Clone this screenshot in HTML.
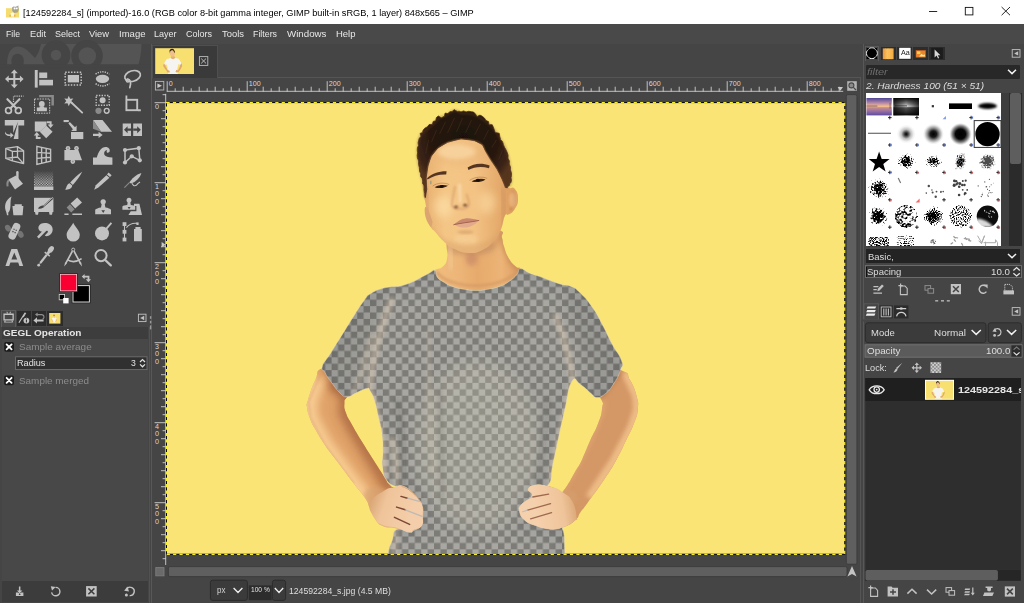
<!DOCTYPE html>
<html><head><meta charset="utf-8"><title>GIMP</title>
<style>
*{box-sizing:border-box;margin:0;padding:0}
html,body{width:1024px;height:603px;overflow:hidden;background:#454545;font-family:"Liberation Sans",sans-serif;}
#root{position:relative;width:1024px;height:603px;overflow:hidden;background:#454545;color:#dedede;font-size:9.6px}
.a{position:absolute}
.t{position:absolute;white-space:nowrap}
svg{position:absolute;overflow:visible}
</style></head><body>
<div id="root">

<!-- title -->
<div class="a" style="left:0;top:0;width:1024px;height:24px;background:#fff"></div>
<svg style="left:6px;top:5px" width="14" height="14" viewBox="0 0 14 14">
<rect x="0" y="3.2" width="13" height="9.3" fill="#f5dc6e"/>
<path d="M6 2.5 L8 1.2 L9 2 L12.4 0.6 L12.8 5 L11.5 7.5 L8 8 L6.2 6 Z" fill="#9a9a92" opacity="0.85"/>
<path d="M4.5 8.2 L7 7.2 L8.5 8.6 L8 11.5 L5 11.5 Z" fill="#fff" opacity="0.8"/>
<circle cx="8.6" cy="3.6" r="1" fill="#fff"/><circle cx="10.8" cy="3.4" r="0.9" fill="#fff"/>
<rect x="3.6" y="9.6" width="1" height="2" fill="#e08a3a" opacity="0.8"/><rect x="8.3" y="9.6" width="1" height="2" fill="#e08a3a" opacity="0.8"/>
</svg>
<div class="t" style="left:23.00px;top:6.68px;font-size:9.6px;line-height:11.04px;color:#000;transform:scaleX(0.9587);transform-origin:0 50%;">[124592284_s] (imported)-16.0 (RGB color 8-bit gamma integer, GIMP built-in sRGB, 1 layer) 848x565 – GIMP</div>
<svg style="left:0;top:0" width="1024" height="24" viewBox="0 0 1024 24" fill="none" stroke="#111" stroke-width="0.9">
<path d="M929 11.5H937.2"/><rect x="965.3" y="7.4" width="7.6" height="7.5"/><path d="M1001.6 7L1010 15.2M1010 7L1001.6 15.2"/></svg>
<div class="a" style="left:0;top:24px;width:1024px;height:19.6px;background:#494949"></div>
<div class="t" style="left:6.00px;top:28.37px;font-size:9.8px;line-height:11.27px;color:#e8e8e8;transform:scaleX(0.8865);transform-origin:0 50%;">File</div>
<div class="t" style="left:30.00px;top:28.37px;font-size:9.8px;line-height:11.27px;color:#e8e8e8;transform:scaleX(0.9475);transform-origin:0 50%;">Edit</div>
<div class="t" style="left:55.00px;top:28.37px;font-size:9.8px;line-height:11.27px;color:#e8e8e8;transform:scaleX(0.9178);transform-origin:0 50%;">Select</div>
<div class="t" style="left:89.00px;top:28.37px;font-size:9.8px;line-height:11.27px;color:#e8e8e8;transform:scaleX(0.9494);transform-origin:0 50%;">View</div>
<div class="t" style="left:118.50px;top:28.37px;font-size:9.8px;line-height:11.27px;color:#e8e8e8;transform:scaleX(0.9729);transform-origin:0 50%;">Image</div>
<div class="t" style="left:153.50px;top:28.37px;font-size:9.8px;line-height:11.27px;color:#e8e8e8;transform:scaleX(0.9178);transform-origin:0 50%;">Layer</div>
<div class="t" style="left:186.00px;top:28.37px;font-size:9.8px;line-height:11.27px;color:#e8e8e8;transform:scaleX(0.9181);transform-origin:0 50%;">Colors</div>
<div class="t" style="left:221.50px;top:28.37px;font-size:9.8px;line-height:11.27px;color:#e8e8e8;transform:scaleX(0.9616);transform-origin:0 50%;">Tools</div>
<div class="t" style="left:252.50px;top:28.37px;font-size:9.8px;line-height:11.27px;color:#e8e8e8;transform:scaleX(0.8996);transform-origin:0 50%;">Filters</div>
<div class="t" style="left:286.50px;top:28.37px;font-size:9.8px;line-height:11.27px;color:#e8e8e8;transform:scaleX(0.9936);transform-origin:0 50%;">Windows</div>
<div class="t" style="left:335.50px;top:28.37px;font-size:9.8px;line-height:11.27px;color:#e8e8e8;transform:scaleX(0.9675);transform-origin:0 50%;">Help</div>

<!-- toolbox -->
<svg style="left:0;top:0" width="152" height="310" viewBox="0 0 152 310">
<!-- wilber banner -->
<g>
<path d="M7,64.5 C7,52 12,46.5 18,46.5 C25,46.5 29,52 35,58 C38,54 40,49 41,44 L141.5,44 C141.5,52 140,59 138.5,64.5 Z" fill="#545454"/>
<circle cx="17.6" cy="59.8" r="6" fill="#454545"/>
<rect x="11.6" y="59.8" width="12" height="5" fill="#454545"/>
<circle cx="56" cy="55" r="14.4" fill="#454545"/>
<circle cx="87" cy="55.8" r="15.8" fill="#454545"/>
<circle cx="56" cy="55" r="5.2" fill="#545454"/>
<circle cx="87.3" cy="56" r="8.8" fill="#545454"/>
<rect x="0" y="64.5" width="152" height="3" fill="#454545"/>
</g>
<g fill="#c2c2c2" stroke="none">
<!-- R1 move -->
<path d="M14.30,69.60 L17.80,73.30 L15.30,73.30 L15.30,77.90 L19.90,77.90 L19.90,75.40 L23.60,78.90 L19.90,82.40 L19.90,79.90 L15.30,79.90 L15.30,84.50 L17.80,84.50 L14.30,88.20 L10.80,84.50 L13.30,84.50 L13.30,79.90 L8.70,79.90 L8.70,82.40 L5.00,78.90 L8.70,75.40 L8.70,77.90 L13.30,77.90 L13.30,73.30 L10.80,73.30 Z"/>
<!-- align -->
<rect x="34.8" y="70" width="2.9" height="17.6"/><rect x="39.2" y="72.5" width="8" height="5.6"/><rect x="39.2" y="79.8" width="13.8" height="5.6"/>
<!-- rect select -->
<rect x="67.8" y="75" width="11.2" height="7.4"/>
<rect x="65.2" y="72.2" width="16" height="12.8" fill="none" stroke="#c2c2c2" stroke-width="1.5" stroke-dasharray="1.5 1.4"/>
<!-- ellipse select -->
<ellipse cx="102.5" cy="78.8" rx="6.7" ry="4.1"/>
<path d="M95.6,74.2 Q102.5,69.4 109.4,74.2 M95.6,83.6 Q102.5,88.4 109.4,83.6" fill="none" stroke="#c2c2c2" stroke-width="1.4" stroke-dasharray="1.3 1.1"/>
<!-- lasso -->
<g fill="none" stroke="#c2c2c2" stroke-width="1.7" stroke-linecap="round">
<ellipse cx="132.6" cy="76" rx="8" ry="5.2" transform="rotate(-17 132.6 76)"/>
<path d="M127.5,79 C130.5,79.5 131.5,82.5 129.8,87.6"/>
<circle cx="127.8" cy="80.6" r="1.6" stroke-width="1.2"/>
</g>

<!-- R2 scissors -->
<g fill="none" stroke="#c2c2c2" stroke-width="1.7">
<circle cx="8.5" cy="110.4" r="2.9"/><circle cx="18.3" cy="110.4" r="2.9"/>
<path d="M7.4,99.2 L16.6,108.4 M19.4,99.2 L10.2,108.4" stroke-width="2.1" stroke-linecap="round"/>
<path d="M13.5,102 V96.2 H23.6" stroke-width="1.2" stroke-dasharray="1.2 1"/>
</g>
<!-- fg select -->
<path d="M39.2,95 H53.9 V105.5 H51.4 V97.2 H39.2 Z" fill="#8a8a8a"/>
<rect x="34.5" y="99" width="15.2" height="14.2" fill="none" stroke="#c2c2c2" stroke-width="1" stroke-dasharray="1.6 1"/>
<circle cx="41.8" cy="104" r="2.9"/>
<path d="M36.8,111.2 V107.6 H39.5 V106.6 H44.2 V107.6 H46.9 V111.2 Z"/>
<!-- wand -->
<path d="M68.8,95.8 l1.3,3 l3.2,-0.4 l-2,2.6 l2,2.6 l-3.2,-0.4 l-1.3,3 l-1.3,-3 l-3.2,0.4 l2,-2.6 l-2,-2.6 l3.2,0.4 z"/>
<path d="M71.6,102.8 L82.2,112.6" stroke="#c2c2c2" stroke-width="1.9" stroke-linecap="round"/>
<!-- select by color -->
<rect x="96.2" y="95.5" width="13" height="9.8" fill="none" stroke="#c2c2c2" stroke-width="1.4" stroke-dasharray="1.4 1.3"/>
<circle cx="102.6" cy="100.2" r="3"/>
<circle cx="98.5" cy="110.8" r="3.1" fill="#8a8a8a"/>
<circle cx="106.7" cy="110.8" r="2.4" fill="none" stroke="#c2c2c2" stroke-width="1.4"/>
<!-- crop -->
<rect x="126.4" y="99.8" width="10.8" height="10.4" fill="none" stroke="#c2c2c2" stroke-width="1.9"/><path d="M125.5,95.6 H127.3 V99 H125.5 Z M138,109.3 H140.8 V111.2 H138 Z" />

<!-- R3 unified transform -->
<path d="M4.8,120 H24.2 V125.6 H18.4 V139 H13.6 L18.2,121.5 L13.2,133 V125.6 H4.8 Z"/>
<path d="M5,131.6 C5.5,134 8,134.6 10.4,134.4 V132.4 L13.6,135.2 L10.4,138 V136 C7,136.4 4.6,135 5,131.6Z"/>
<!-- rotate -->
<path d="M34.8,121.5 H46.5 V125.6 L40.2,131.6 H34.8 Z"/>
<path d="M46.2,125.4 L52.6,131.8 L46.2,138.2 L39.8,131.8 Z"/>
<path d="M46.8,121.2 H51.6 V124.6 H53.6 L50.6,128 L47.6,124.6 H49.6 V123.2 H46.8 Z"/>
<path d="M40.6,138.9 H35.8 V135.5 H33.8 L36.8,132.1 L39.8,135.5 H37.8 V136.9 H40.6 Z"/>
<!-- scale -->
<rect x="63.6" y="120" width="5.2" height="2.1"/>
<path d="M69.8,122 L75,127.2 L76.6,125.6 V131 H71.2 L72.9,129.3 L68.4,123.6 Z"/>
<rect x="71" y="132" width="12.3" height="7.1"/>
<!-- shear -->
<path d="M93,120 H102.5 L112,131.7 H101 Z"/>
<path d="M93,120 L101,131.7 L93,128.8 Z" fill="#8a8a8a"/>
<path d="M93,133.8 H98.6 V131.8 L102.6,134.9 L98.6,138 V136 H93 Z"/>
<!-- flip -->
<path d="M122.7,123.4 H131 V136 H122.7 Z M133.2,123.4 H142 V136 H133.2 Z"/>
<path d="M124,129.7 L127.6,126.2 V128.6 H131 V130.8 H127.6 V133.2 Z M140.8,129.7 L137.2,126.2 V128.6 H133.2 V130.8 H137.2 V133.2 Z" fill="#454545"/>

<!-- R4 cube -->
<g fill="none" stroke="#c2c2c2" stroke-width="1.3" stroke-linejoin="round">
<path d="M5.8,148.4 L17.5,146.6 L23.6,150.8 V163.6 L12.4,160.8 L5.8,158.4 Z M5.8,148.4 L12.4,151.4 L23.6,150.8 M12.4,151.4 V160.8 M17.5,146.6 V157 L23.6,163.6 M5.8,158.4 L17.5,157"/>
</g>
<!-- perspective grid -->
<g fill="none" stroke="#c2c2c2" stroke-width="1.4">
<path d="M36.9,146.4 L50.6,149.4 V161.2 L36.9,164.4 Z M41.6,147.4 V163.3 M46.2,148.4 V162.2 M36.9,152.4 L50.6,153.3 M36.9,158.4 L50.6,157.3"/>
</g>
<!-- handle transform -->
<path d="M64.4,150 H78.3 L82,160.3 H64.4 Z"/>
<circle cx="68" cy="148.2" r="2.3"/><circle cx="76.5" cy="148.2" r="2.3"/><circle cx="72.8" cy="161.6" r="2.3"/>
<circle cx="68" cy="148.2" r="1" fill="#454545" opacity="0.35"/><circle cx="76.5" cy="148.2" r="1" fill="#454545" opacity="0.35"/><circle cx="72.8" cy="161.6" r="1" fill="#454545" opacity="0.35"/>
<!-- warp -->
<path d="M93,164.7 V157.4 H96.8 C98.6,151.6 101.2,147 105.6,147 C108.6,147 110.4,149.2 109.6,151.6 C109.2,152.8 107.6,153.2 106.8,152.2 C106.4,151.4 107,150.6 107.2,150.2 C105,149.8 103.4,152.6 104.6,155 C105.4,156.6 108,157.4 112.4,157.4 V164.7 Z"/>
<!-- cage -->
<g fill="none" stroke="#c2c2c2" stroke-width="1.5">
<path d="M125,150 L138.8,148.2 L139.8,160.3 L131.8,156.3 L125,162.5 Z"/>
</g>
<circle cx="125" cy="150" r="2.1"/><circle cx="138.8" cy="148.2" r="2.1"/><circle cx="139.8" cy="160.3" r="2.1"/><circle cx="131.8" cy="156.3" r="2.1"/><circle cx="125" cy="162.5" r="2.1"/>

<!-- R5 bucket -->
<path d="M8.4,179.6 L16,175.6 L23,183.8 L15,189.6 Z"/>
<path d="M8.4,179.6 C6.6,180.6 6,183 6.6,186.6 L8.6,186.2 C8.2,183.6 8.6,181.6 9.6,181.2 Z" fill="#8a8a8a"/>
<rect x="16.2" y="171" width="2.4" height="10" rx="1.2"/>
<!-- gradient -->
<defs><pattern id="dith" x="34" y="171" width="2.6" height="2.6" patternUnits="userSpaceOnUse"><rect width="1.3" height="1.3" fill="#c2c2c2"/><rect x="1.3" y="1.3" width="1.3" height="1.3" fill="#c2c2c2"/></pattern>
<linearGradient id="dg" x1="0" y1="0" x2="0" y2="1"><stop offset="0" stop-color="#fff" stop-opacity="0.05"/><stop offset="0.35" stop-color="#fff" stop-opacity="0.5"/><stop offset="0.7" stop-color="#fff" stop-opacity="1"/><stop offset="1" stop-color="#fff" stop-opacity="1"/></linearGradient>
<mask id="dm"><rect x="34" y="171" width="19.4" height="16" fill="url(#dg)"/></mask></defs>
<rect x="34" y="171.4" width="19.4" height="15.4" fill="url(#dith)" mask="url(#dm)"/>
<rect x="34" y="186.6" width="19.4" height="3.4"/>
<!-- paintbrush -->
<path d="M82.2,171.8 C80,176.4 76,181.6 72.8,185 L70.2,182.6 C73.4,179 78,174.6 82.2,171.8 Z"/>
<path d="M69.6,183.2 L72.2,185.6 C72,188.8 68.6,190.2 64.8,189.6 C67,188.4 66,184.2 69.6,183.2 Z"/>
<!-- pencil -->
<path d="M108.6,172.6 L111.6,175.2 L110,177 L107,174.4 Z"/>
<path d="M106.4,175.2 L109.4,177.8 L98.4,187.6 L94.2,189.8 L95.8,185.2 Z"/>
<!-- ink -->
<path d="M141.4,173 C136,174.6 131.6,178.6 129.4,182.6 L131,183.4 C135.8,182 140,178 141.4,173 Z"/>
<path d="M129.6,182.4 L124.4,187.6" stroke="#8a8a8a" stroke-width="1.1"/>
<path d="M132,183.4 L133.6,185.6 C135.4,186.2 136.6,185.6 137.8,183.6 L140,182" fill="none" stroke="#c2c2c2" stroke-width="1.1"/>

<!-- R6 calligraphy + pot -->
<path d="M11.6,196.6 C5.6,199.6 3.4,206.6 6.4,212.4 L7,215.2 L8.4,215.2 L8.2,212.8 C12,209.4 9.4,201.4 11.6,196.6 Z"/>
<path d="M14.6,204.2 H21.8 V206 H23.4 L22.6,215.3 H13.4 L12.4,206 H14.6 Z"/>
<!-- mypaint -->
<path d="M34,197.8 H53.4 V212 H34 Z"/>
<path d="M35,212 H38.6 L38,214.7 H35.6 Z M49,212 H52.6 L52,214.7 H49.6 Z"/>
<path d="M52,197.2 L43.4,205.6 C42,205.2 39.6,206 38,208.4 C40,209.2 43,208.6 44.4,206.6 L53,199 Z" fill="#454545"/>
<path d="M52.6,197.4 L43.6,206" stroke="#c2c2c2" stroke-width="0.9"/>
<!-- eraser -->
<path d="M77.2,197.6 L82,202.6 L75.2,208.6 L70.6,203.6 Z"/>
<path d="M70,204.2 L74.6,209.2 L71.2,212.4 L66.6,207.4 Z" fill="#8a8a8a"/>
<path d="M64.4,213.4 H68.6 V215 H64.4 Z M72.4,213.4 H82 V215 H72.4 Z"/>
<!-- clone -->
<path d="M103.2,199.2 a2.7,2.7 0 1 1 -0.01,0 Z"/>
<path d="M101.8,203.6 H104.6 L105.4,207.6 C108,208 110.4,208.8 111,209.8 V214.2 H95.2 V209.8 C96,208.8 98.4,208 101,207.6 Z"/>
<path d="M101.4,210.2 H105 L103.2,213 Z" fill="#454545"/>
<!-- perspective clone -->
<path d="M129,197.8 a2.5,2.5 0 1 1 -0.01,0 Z"/>
<path d="M127.8,202 H130.2 L130.8,205 C133,205.2 134.6,205.6 135.2,206.4 V209.8 H122.4 V206.4 C123,205.6 125,205.2 127.2,205 Z"/>
<path d="M127.6,207 H130.6 L129.1,209.2 Z" fill="#454545"/>
<path d="M134,203.8 H139.4 L142,215 H128.4 L130.8,211.2 H136.4 V206 H134 Z"/>

<!-- R7 heal -->
<ellipse cx="8" cy="228.2" rx="2.8" ry="3.6" fill="#747474" transform="rotate(-30 8 228.2)"/>
<ellipse cx="20.6" cy="234.4" rx="2.8" ry="3.6" fill="#747474" transform="rotate(-30 20.6 234.4)"/>
<rect x="10.6" y="222.6" width="7.6" height="17.4" rx="3.6" transform="rotate(25 14.4 231.3)"/>
<g fill="#454545" transform="rotate(25 14.4 231.3)"><rect x="12.6" y="229" width="1.2" height="1.2"/><rect x="15" y="229" width="1.2" height="1.2"/><rect x="12.6" y="231.6" width="1.2" height="1.2"/><rect x="15" y="231.6" width="1.2" height="1.2"/></g>
<!-- smudge -->
<path d="M38.6,226.4 C40,222.6 46,222 50,224.4 C53.6,226.6 53.4,232 50.4,234.6 C48.6,236.2 46,236.6 44.8,235.6 L47.6,232.6 C48.6,231.4 47.4,230 46.2,231 L38.8,238.6 L37,236.8 L42,231.6 C39.6,231.4 37.8,229 38.6,226.4 Z"/>
<!-- blur drop -->
<path d="M73.2,222.8 C75,227 79.8,230.6 79.8,235 A6.6,6.6 0 0 1 66.6,235 C66.6,230.6 71.4,227 73.2,222.8 Z"/>
<!-- dodge -->
<circle cx="102" cy="233.4" r="7"/>
<path d="M105.6,229.6 L111.4,222.8" stroke="#c2c2c2" stroke-width="1.9"/>
<!-- paths -->
<rect x="122.6" y="222.2" width="3.8" height="3.8"/><rect x="122.6" y="229.9" width="3.8" height="3.8"/><rect x="122.6" y="237.6" width="3.8" height="3.8"/>
<path d="M124.5,224 V239.5 M126.4,227.6 C129,224.4 133,222.8 137.2,223.4" fill="none" stroke="#c2c2c2" stroke-width="1.1"/>
<rect x="136.4" y="222.4" width="2.2" height="2.6"/>
<path d="M135.4,227 H140.6 V229 H141.8 V241.2 H134 V229 H135.4 Z"/>

<!-- R8 text A -->
<path d="M11.4,249 H17.2 L23.2,266 H19.4 L18.2,262.4 H10.4 L9.2,266 H5.4 Z M14.3,252.6 L11.4,259.6 H17.2 Z" fill-rule="evenodd"/>
<!-- color picker -->
<g transform="rotate(38 45 257)">
<ellipse cx="45" cy="247.4" rx="2.5" ry="3.6"/>
<rect x="43.6" y="249.6" width="2.8" height="3.4"/>
<rect x="41.8" y="252.6" width="6.4" height="1.5"/>
<path d="M43.9,254 H46.1 V264 L45,266 L43.9,264 Z"/>
</g>
<circle cx="38.7" cy="265.2" r="1.4"/>
<!-- compass -->
<g fill="none" stroke="#c2c2c2">
<circle cx="73.2" cy="249.6" r="1.5" stroke-width="1"/>
<path d="M72.4,251.2 L65.6,263.6 M74,251.2 L80.6,263.6" stroke-width="1.7"/>
<path d="M67.2,259.6 C71,262.2 76.6,262 81.6,258.6" stroke-width="1.7"/>
</g>
<path d="M64.2,266.6 L65,262.4 L66.8,263.4 Z M82,266.6 L81.2,262.4 L79.4,263.4 Z"/>
<!-- zoom -->
<circle cx="101" cy="255.6" r="5.6" fill="none" stroke="#c2c2c2" stroke-width="2"/>
<path d="M105.2,260 L110.8,265.4" stroke="#c2c2c2" stroke-width="2.3" stroke-linecap="round"/>
</g>

<!-- colour swatches -->
<rect x="71.6" y="284.2" width="19.2" height="19.2" fill="#2a2a2a"/>
<rect x="72.5" y="285.1" width="17.4" height="17.4" fill="#d6d6d6"/>
<rect x="73.5" y="286.1" width="15.4" height="15.4" fill="#000"/>
<rect x="59.2" y="273.2" width="18.6" height="18.8" fill="#2a2a2a"/>
<rect x="60" y="274" width="17" height="17.2" fill="#f0d0d4"/>
<rect x="60.7" y="274.7" width="15.6" height="15.8" fill="#fa0032"/>
<g fill="#c2c2c2">
<path d="M81.8,276.6 L84.6,274 V275.8 H89.4 V279.2 H91 L88.4,282.2 L85.8,279.2 H87.6 V277.6 H84.6 V279.2 Z"/>
</g>
<rect x="59.2" y="294.4" width="5.4" height="5.4" fill="#000" stroke="#d8d8d8" stroke-width="0.8"/>
<rect x="63.2" y="298" width="5.4" height="5.4" fill="#fff"/>
</svg>

<!-- leftdock -->
<div class="a" style="left:1.5px;top:326.5px;width:146.5px;height:254.5px;background:#484848"></div>
<div class="a" style="left:1.5px;top:327px;width:146.5px;height:12.3px;background:#3d3d3d"></div>
<div class="a" style="left:1.5px;top:581px;width:146.5px;height:21px;background:#3c3c3c"></div>
<div class="a" style="left:148.6px;top:327px;width:1px;height:276px;background:#525252"></div>
<div class="a" style="left:151.4px;top:44px;width:1px;height:559px;background:#585858"></div>
<div class="a" style="left:1.2px;top:309.6px;width:15px;height:17.4px;background:#484848;border:1px solid #5c5c5c;border-bottom:none"></div>
<div class="a" style="left:17px;top:311.4px;width:14px;height:14.4px;background:#2c2c2c"></div>
<div class="a" style="left:31.8px;top:311.4px;width:13.999999999999996px;height:14.4px;background:#2c2c2c"></div>
<div class="a" style="left:47px;top:311.4px;width:16px;height:14.4px;background:#2c2c2c"></div>
<svg style="left:0;top:300px" width="152" height="303" viewBox="0 300 152 303">
<g fill="#c2c2c2">
<!-- tab1 tool options icon -->
<path d="M3.4,313.6 H13.8 V320.6 H3.4 Z M4.7,314.9 V319.3 H12.5 V314.9 Z" fill-rule="evenodd"/>
<path d="M6.4,311.8 h1 l0.6,1.8 h-1 Z M11,311.8 h-1 l-0.6,1.8 h1 Z M4.6,320.6 h1.2 l-0.6,1.8 h-1.2 Z M12.6,320.6 h-1.2 l0.6,1.8 h1.2 Z M5,321.8 H12.2 V322.6 H5 Z"/>
<!-- tab2 device status -->
<path d="M25.6,313 L19.4,323 L18.4,322.4 L24.6,312.6 Z" />
<path d="M22.6,316.4 L25.8,312.4 L26.2,313.2 L23.6,317.4Z"/>
<circle cx="26.4" cy="320.6" r="2.9"/>
<rect x="25.9" y="319.8" width="1" height="2.6" fill="#2c2c2c"/><rect x="25.9" y="318.4" width="1" height="0.9" fill="#2c2c2c"/>
<!-- tab3 undo history -->
<path d="M33.4,320.4 L37,317.2 V319.4 H43.6 V321.4 H37 V323.6 Z"/>
<path d="M36.6,314.6 H41.6 C44.6,314.6 44.6,319 42.4,319" fill="none" stroke="#8e8e8e" stroke-width="1.1"/>
<path d="M35,314.6 L37.6,312.6 V316.6 Z" fill="#8e8e8e"/>
<!-- dock menu button -->
<rect x="138.4" y="314.2" width="7.6" height="7.4" fill="none" stroke="#c2c2c2" stroke-width="0.9"/>
<path d="M144.2,315.8 V320.2 L140.2,318 Z"/>
<!-- handle dots -->
<rect x="149.9" y="316.2" width="1.4" height="2.6" fill="#9a9a9a"/><rect x="149.9" y="320.8" width="1.4" height="2.6" fill="#9a9a9a"/><rect x="149.9" y="325.4" width="1.4" height="4" fill="#9a9a9a"/>
</g>
<!-- tab4 image thumb -->
<rect x="49.2" y="313" width="11.2" height="10.6" fill="#f7df6f"/>
<clipPath id="oclip"><rect x="49.2" y="313" width="11.2" height="10.6"/></clipPath><g clip-path="url(#oclip)"><path d="M52.22,318.95 L51.78,318.98 L51.65,319.18 L51.53,319.52 L51.52,319.64 L51.57,319.84 L51.65,320.00 L51.82,320.27 L52.06,320.59 L52.30,320.91 L52.48,321.14 L52.54,321.28 L52.64,321.48 L52.77,321.60 L52.97,321.63 L53.20,321.70 L53.28,321.66 L53.40,321.58 L53.42,321.42 L53.41,321.25 L53.33,321.12 L53.20,320.99 L53.09,320.94 L52.97,320.96 L52.86,320.90 L52.80,320.79 L52.62,320.51 L52.42,320.19 L52.24,319.89 L52.16,319.73 L52.13,319.57 L52.18,319.46 L52.38,319.24 Z" fill="#e2a870"/><path d="M56.28,318.95 L56.72,319.03 L56.85,319.18 L56.95,319.44 L56.98,319.66 L56.91,319.90 L56.78,320.19 L56.63,320.49 L56.43,320.81 L56.15,321.21 L56.03,321.37 L55.94,321.50 L55.74,321.61 L55.51,321.64 L55.28,321.58 L55.11,321.50 L55.02,321.35 L55.05,321.24 L55.23,321.09 L55.17,320.98 L55.31,320.91 L55.57,320.95 L55.68,321.03 L55.77,320.98 L55.94,320.69 L56.06,320.49 L56.19,320.19 L56.32,319.90 L56.38,319.66 L56.36,319.49 L56.15,319.24 Z" fill="#e2a870"/><path d="M54.20,316.64 L53.85,316.73 L53.82,316.87 L53.82,316.98 L53.83,317.17 L53.76,317.31 L53.62,317.37 L53.66,317.48 L53.76,317.56 L53.92,317.64 L54.11,317.68 L54.30,317.70 L54.50,317.68 L54.69,317.64 L54.84,317.56 L54.98,317.44 L55.04,317.35 L54.96,317.31 L54.84,317.17 L54.77,316.98 L54.73,316.83 L54.68,316.70 Z" fill="#e6ae78"/><path d="M53.62,317.37 L53.49,317.44 L53.13,317.61 L52.82,317.66 L52.58,317.75 L52.46,317.87 L52.30,318.11 L52.10,318.43 L51.90,318.74 L51.77,318.95 L51.81,319.06 L51.90,319.20 L52.06,319.40 L52.18,319.46 L52.32,319.40 L52.50,319.32 L52.56,319.36 L52.64,319.54 L52.70,319.79 L52.76,320.07 L52.77,320.35 L52.77,320.63 L52.83,320.84 L52.98,320.93 L53.09,320.94 L53.20,320.99 L53.33,321.12 L53.41,321.25 L53.42,321.42 L53.40,321.58 L53.28,321.66 L53.20,321.70 L52.99,321.65 L52.92,321.84 L52.86,322.05 L52.81,322.48 L55.82,322.48 L55.77,322.05 L55.74,321.67 L55.65,321.64 L55.51,321.64 L55.28,321.58 L55.11,321.50 L55.02,321.35 L55.05,321.24 L55.23,321.09 L55.17,320.98 L55.31,320.91 L55.50,320.90 L55.57,320.58 L55.66,320.18 L55.77,319.66 L55.89,319.20 L56.03,319.26 L56.20,319.40 L56.30,319.47 L56.43,319.42 L56.57,319.26 L56.69,319.02 L56.71,318.86 L56.55,318.58 L56.39,318.27 L56.23,317.99 L56.03,317.75 L55.87,317.64 L55.68,317.59 L55.36,317.47 L55.19,317.42 L55.04,317.35 L54.98,317.44 L54.84,317.56 L54.69,317.64 L54.50,317.68 L54.30,317.70 L54.11,317.68 L53.92,317.64 L53.76,317.56 L53.66,317.48 Z" fill="#f6f4f0"/><path d="M53.44,315.71 L53.43,316.05 L53.47,316.28 L53.49,316.45 L53.52,316.59 L53.58,316.68 L53.64,316.74 L53.76,316.88 L53.93,317.01 L54.19,317.08 L54.42,317.03 L54.60,316.88 L54.71,316.71 L54.78,316.47 L54.84,316.45 L54.94,316.36 L55.00,316.19 L54.94,316.02 L54.83,315.98 L54.81,315.71 L54.61,315.30 L54.03,315.13 L53.57,315.31 Z" fill="#f0c088"/><path d="M53.47,316.17 L53.45,316.03 L53.43,315.90 L53.39,315.73 L53.35,315.51 L53.35,315.35 L53.37,315.18 L53.45,315.08 L53.59,314.97 L53.70,314.86 L53.81,314.81 L53.95,314.73 L54.06,314.78 L54.22,314.79 L54.36,314.84 L54.49,314.94 L54.60,315.05 L54.71,315.21 L54.80,315.38 L54.85,315.57 L54.88,315.76 L54.88,315.92 L54.82,316.00 L54.80,316.00 L54.74,315.87 L54.66,315.70 L54.55,315.54 L54.47,315.40 L54.41,315.30 L54.28,315.23 L54.06,315.20 L53.84,315.25 L53.67,315.35 L53.56,315.49 L53.51,315.65 L53.48,315.84 L53.49,316.04 Z" fill="#2e1c12"/></g>
<!-- checkboxes -->
<g>
<rect x="4.2" y="342" width="9.8" height="9.8" rx="1.8" fill="#1c1c1c"/>
<path d="M6.6,344.4 L11.6,349.4 M11.6,344.4 L6.6,349.4" stroke="#fff" stroke-width="1.8" stroke-linecap="round"/>
<rect x="4.2" y="375.4" width="9.8" height="9.8" rx="1.8" fill="#1c1c1c"/>
<path d="M6.6,377.8 L11.6,382.8 M11.6,377.8 L6.6,382.8" stroke="#fff" stroke-width="1.8" stroke-linecap="round"/>
</g>
<!-- radius spin -->
<rect x="15.6" y="356.8" width="131.4" height="12.8" fill="#303030" stroke="#707070" stroke-width="0.9"/>
<path d="M140,362 L142.5,359.6 L145,362 M140,364.4 L142.5,366.8 L145,364.4" fill="none" stroke="#e0e0e0" stroke-width="1.3"/>
<!-- bottom icons -->
<g fill="#c2c2c2">
<path d="M18.9,586.4 h1.5 v4 h2 l-2.75,2.8 l-2.75,-2.8 h2 Z"/>
<path d="M15.9,592.4 h2.4 l1.35,1.4 l1.35,-1.4 h2.4 v3.6 h-7.5 Z"/>
<rect x="18.9" y="594" width="1.5" height="1" fill="#3c3c3c"/>
<!-- restore -->
<path d="M55.6,587.4 A4.2,4.2 0 1 1 51.6,592.4" fill="none" stroke="#c2c2c2" stroke-width="1.4"/>
<path d="M50.8,586.2 L55.8,587 L52,590.6 Z"/>
<!-- delete -->
<rect x="86.1" y="586.1" width="10.6" height="10.4" fill="#c2c2c2"/>
<path d="M88.4,588.4 L94.4,594.2 M94.4,588.4 L88.4,594.2" stroke="#3c3c3c" stroke-width="1.5"/>
<!-- reset -->
<path d="M126.6,589 A4.2,4.2 0 1 1 129.6,595.6" fill="none" stroke="#c2c2c2" stroke-width="1.4"/>
<path d="M124.2,590.8 L127.4,586.6 L129,591.4 Z"/>
<circle cx="126.4" cy="595" r="1.5"/>
</g>
</svg>
<div class="t" style="left:3.00px;top:327.37px;font-size:9.8px;line-height:11.27px;color:#e4e4e4;font-weight:bold;transform:scaleX(1.0248);transform-origin:0 50%;">GEGL Operation</div>
<div class="t" style="left:19.00px;top:341.37px;font-size:9.8px;line-height:11.27px;color:#8c8c8c;transform:scaleX(1.0187);transform-origin:0 50%;">Sample average</div>
<div class="t" style="left:17.40px;top:357.37px;font-size:9.8px;line-height:11.27px;color:#e4e4e4;transform:scaleX(0.9310);transform-origin:0 50%;">Radius</div>
<div class="t" style="left:131.20px;top:357.37px;font-size:9.8px;line-height:11.27px;color:#e4e4e4;transform:scaleX(0.8807);transform-origin:0 50%;">3</div>
<div class="t" style="left:19.00px;top:374.76px;font-size:9.8px;line-height:11.27px;color:#8c8c8c;transform:scaleX(1.0118);transform-origin:0 50%;">Sample merged</div>

<!-- canvas -->
<div class="a" style="left:152px;top:45px;width:65.5px;height:33px;background:#3a3a3a;border:1px solid #4f4f4f;border-bottom:none"></div>
<div class="a" style="left:217.5px;top:77.4px;width:643.5px;height:1px;background:#555"></div>
<div class="a" style="left:860.2px;top:78px;width:1px;height:525px;background:#555"></div>
<div class="a" style="left:862.6px;top:44px;width:1px;height:559px;background:#585858"></div>
<svg style="left:152px;top:44px" width="70" height="36" viewBox="152 44 70 36">
<rect x="155.2" y="48.2" width="38.8" height="25.8" fill="#f8e070"/>
<clipPath id="tclip"><rect x="155.2" y="48.2" width="38.8" height="25.8"/></clipPath><g clip-path="url(#tclip)"><path d="M165.65,63.26 L164.15,63.37 L163.70,64.06 L163.27,65.24 L163.22,65.66 L163.41,66.34 L163.70,66.91 L164.28,67.85 L165.11,68.94 L165.94,70.05 L166.57,70.87 L166.79,71.36 L167.13,72.04 L167.58,72.44 L168.27,72.55 L169.06,72.78 L169.35,72.67 L169.74,72.39 L169.84,71.82 L169.80,71.25 L169.52,70.79 L169.06,70.33 L168.66,70.17 L168.27,70.25 L167.89,70.01 L167.66,69.64 L167.04,68.67 L166.35,67.57 L165.74,66.52 L165.45,65.96 L165.36,65.43 L165.52,65.03 L166.23,64.29 Z" fill="#e2a870"/><path d="M179.72,63.26 L181.25,63.54 L181.69,64.06 L182.06,64.97 L182.14,65.73 L181.92,66.56 L181.46,67.55 L180.93,68.61 L180.26,69.70 L179.26,71.10 L178.86,71.64 L178.56,72.10 L177.87,72.50 L177.07,72.59 L176.28,72.39 L175.68,72.10 L175.38,71.60 L175.48,71.20 L176.08,70.70 L175.88,70.31 L176.37,70.07 L177.27,70.20 L177.67,70.47 L177.96,70.31 L178.56,69.31 L178.95,68.61 L179.41,67.55 L179.87,66.56 L180.09,65.73 L180.02,65.12 L179.27,64.29 Z" fill="#e2a870"/><path d="M172.52,55.25 L171.32,55.60 L171.19,56.05 L171.20,56.44 L171.23,57.11 L171.00,57.57 L170.53,57.81 L170.67,58.18 L171.00,58.45 L171.53,58.72 L172.20,58.88 L172.88,58.95 L173.55,58.88 L174.22,58.72 L174.75,58.45 L175.22,58.04 L175.42,57.71 L175.15,57.57 L174.75,57.11 L174.49,56.44 L174.37,55.94 L174.18,55.48 Z" fill="#e6ae78"/><path d="M170.53,57.81 L170.06,58.04 L168.82,58.63 L167.73,58.79 L166.90,59.11 L166.49,59.52 L165.94,60.35 L165.25,61.45 L164.56,62.55 L164.10,63.28 L164.25,63.66 L164.56,64.13 L165.11,64.82 L165.52,65.03 L166.00,64.82 L166.63,64.56 L166.83,64.69 L167.11,65.30 L167.31,66.19 L167.52,67.16 L167.57,68.12 L167.55,69.09 L167.78,69.81 L168.29,70.15 L168.66,70.17 L169.06,70.33 L169.52,70.79 L169.80,71.25 L169.84,71.82 L169.74,72.39 L169.35,72.67 L169.06,72.78 L168.34,72.62 L168.09,73.27 L167.86,74.01 L167.71,75.50 L178.12,75.50 L177.97,74.01 L177.87,72.70 L177.55,72.58 L177.07,72.59 L176.28,72.39 L175.68,72.10 L175.38,71.60 L175.48,71.20 L176.08,70.70 L175.88,70.31 L176.37,70.07 L177.04,70.03 L177.27,68.91 L177.57,67.52 L177.96,65.73 L178.36,64.15 L178.86,64.33 L179.46,64.83 L179.78,65.07 L180.24,64.89 L180.73,64.34 L181.15,63.51 L181.21,62.96 L180.66,62.00 L180.11,60.90 L179.55,59.94 L178.87,59.11 L178.32,58.72 L177.63,58.56 L176.53,58.16 L175.96,57.96 L175.42,57.71 L175.22,58.04 L174.75,58.45 L174.22,58.72 L173.55,58.88 L172.88,58.95 L172.20,58.88 L171.53,58.72 L171.00,58.45 L170.67,58.18 Z" fill="#f6f4f0"/><path d="M169.89,52.05 L169.86,53.22 L170.01,54.02 L170.06,54.61 L170.17,55.08 L170.36,55.41 L170.57,55.62 L171.00,56.11 L171.60,56.56 L172.50,56.80 L173.30,56.61 L173.89,56.11 L174.29,55.51 L174.54,54.68 L174.74,54.61 L175.09,54.31 L175.29,53.72 L175.09,53.12 L174.69,52.99 L174.63,52.05 L173.95,50.62 L171.95,50.05 L170.34,50.68 Z" fill="#f0c088"/><path d="M169.98,53.64 L169.94,53.16 L169.84,52.69 L169.70,52.12 L169.56,51.36 L169.56,50.80 L169.65,50.22 L169.94,49.85 L170.41,49.47 L170.79,49.09 L171.17,48.94 L171.64,48.66 L172.03,48.81 L172.59,48.85 L173.07,49.04 L173.54,49.37 L173.92,49.75 L174.30,50.32 L174.58,50.89 L174.77,51.55 L174.87,52.21 L174.87,52.79 L174.68,53.07 L174.58,53.07 L174.39,52.60 L174.11,52.03 L173.73,51.46 L173.44,50.99 L173.26,50.61 L172.78,50.37 L172.03,50.28 L171.27,50.46 L170.70,50.80 L170.32,51.27 L170.13,51.84 L170.03,52.50 L170.06,53.19 Z" fill="#2e1c12"/></g>
<rect x="199.4" y="56.6" width="8.4" height="8.8" fill="none" stroke="#bdbdbd" stroke-width="0.9"/>
<path d="M201.2,58.6 L206,63.4 M206,58.6 L201.2,63.4" stroke="#bdbdbd" stroke-width="1"/>
</svg>
<svg style="left:0;top:0" width="1024" height="603" viewBox="0 0 1024 603"><g stroke="#cfcfcf" stroke-width="0.9" fill="none"><path d="M166.8,91.3 H843.2 M167.2,81.2 V91.6 M175.2,88.3 V91.6 M183.2,86.7 V91.6 M191.2,88.3 V91.6 M199.2,86.7 V91.6 M207.2,88.3 V91.6 M215.2,86.7 V91.6 M223.2,88.3 V91.6 M231.2,86.7 V91.6 M239.2,88.3 V91.6 M247.2,81.2 V91.6 M255.2,88.3 V91.6 M263.2,86.7 V91.6 M271.2,88.3 V91.6 M279.2,86.7 V91.6 M287.2,88.3 V91.6 M295.2,86.7 V91.6 M303.2,88.3 V91.6 M311.2,86.7 V91.6 M319.2,88.3 V91.6 M327.2,81.2 V91.6 M335.2,88.3 V91.6 M343.2,86.7 V91.6 M351.2,88.3 V91.6 M359.2,86.7 V91.6 M367.2,88.3 V91.6 M375.2,86.7 V91.6 M383.2,88.3 V91.6 M391.2,86.7 V91.6 M399.2,88.3 V91.6 M407.2,81.2 V91.6 M415.2,88.3 V91.6 M423.2,86.7 V91.6 M431.2,88.3 V91.6 M439.2,86.7 V91.6 M447.2,88.3 V91.6 M455.2,86.7 V91.6 M463.2,88.3 V91.6 M471.2,86.7 V91.6 M479.2,88.3 V91.6 M487.2,81.2 V91.6 M495.2,88.3 V91.6 M503.2,86.7 V91.6 M511.2,88.3 V91.6 M519.2,86.7 V91.6 M527.2,88.3 V91.6 M535.2,86.7 V91.6 M543.2,88.3 V91.6 M551.2,86.7 V91.6 M559.2,88.3 V91.6 M567.2,81.2 V91.6 M575.2,88.3 V91.6 M583.2,86.7 V91.6 M591.2,88.3 V91.6 M599.2,86.7 V91.6 M607.2,88.3 V91.6 M615.2,86.7 V91.6 M623.2,88.3 V91.6 M631.2,86.7 V91.6 M639.2,88.3 V91.6 M647.2,81.2 V91.6 M655.2,88.3 V91.6 M663.2,86.7 V91.6 M671.2,88.3 V91.6 M679.2,86.7 V91.6 M687.2,88.3 V91.6 M695.2,86.7 V91.6 M703.2,88.3 V91.6 M711.2,86.7 V91.6 M719.2,88.3 V91.6 M727.2,81.2 V91.6 M735.2,88.3 V91.6 M743.2,86.7 V91.6 M751.2,88.3 V91.6 M759.2,86.7 V91.6 M767.2,88.3 V91.6 M775.2,86.7 V91.6 M783.2,88.3 V91.6 M791.2,86.7 V91.6 M799.2,88.3 V91.6 M807.2,81.2 V91.6 M815.2,88.3 V91.6 M823.2,86.7 V91.6 M831.2,88.3 V91.6 M839.2,86.7 V91.6 M165.7,93.8 V565 M162.6,94.7 H166 M154.6,102.7 H166 M162.6,110.7 H166 M161,118.7 H166 M162.6,126.7 H166 M161,134.7 H166 M162.6,142.7 H166 M161,150.7 H166 M162.6,158.7 H166 M161,166.7 H166 M162.6,174.7 H166 M154.6,182.7 H166 M162.6,190.7 H166 M161,198.7 H166 M162.6,206.7 H166 M161,214.7 H166 M162.6,222.7 H166 M161,230.7 H166 M162.6,238.7 H166 M161,246.7 H166 M162.6,254.7 H166 M154.6,262.7 H166 M162.6,270.7 H166 M161,278.7 H166 M162.6,286.7 H166 M161,294.7 H166 M162.6,302.7 H166 M161,310.7 H166 M162.6,318.7 H166 M161,326.7 H166 M162.6,334.7 H166 M154.6,342.7 H166 M162.6,350.7 H166 M161,358.7 H166 M162.6,366.7 H166 M161,374.7 H166 M162.6,382.7 H166 M161,390.7 H166 M162.6,398.7 H166 M161,406.7 H166 M162.6,414.7 H166 M154.6,422.7 H166 M162.6,430.7 H166 M161,438.7 H166 M162.6,446.7 H166 M161,454.7 H166 M162.6,462.7 H166 M161,470.7 H166 M162.6,478.7 H166 M161,486.7 H166 M162.6,494.7 H166 M154.6,502.7 H166 M162.6,510.7 H166 M161,518.7 H166 M162.6,526.7 H166 M161,534.7 H166 M162.6,542.7 H166 M161,550.7 H166 M162.6,558.7 H166 "/></g><rect x="155.4" y="81.4" width="8.4" height="8.6" fill="none" stroke="#b8b8b8" stroke-width="0.9"/><path d="M157.4,83.4 V88 L162,85.7 Z" fill="#c8c8c8"/><rect x="847.2" y="81.2" width="9.6" height="9.6" fill="#b4b4b4"/><circle cx="851.4" cy="85.4" r="2.5" fill="#8a8a8a" stroke="#4a4a4a" stroke-width="1.1"/><path d="M853.4,87.4 L856,90" stroke="#4a4a4a" stroke-width="1.3"/><path d="M837.6,87 H843 L840.3,90.8 Z" fill="#c8c8c8"/><path d="M161.6,242 V247.4 L165.6,244.7 Z" fill="#c8c8c8"/><rect x="846.3" y="94.6" width="10.6" height="469.6" rx="1.6" fill="#5f5f5f" stroke="#393939" stroke-width="0.8"/><rect x="168.4" y="566.6" width="678.6" height="10" rx="1.6" fill="#5f5f5f" stroke="#393939" stroke-width="0.8"/><rect x="155.8" y="567.6" width="8.2" height="8.2" fill="#6a6a6a" stroke="#7c7c7c" stroke-width="0.9"/><path d="M852,566 L856.6,576.6 L852,574 L847.4,576.6 Z" fill="#c4c4c4"/></svg>
<div class="t" style="left:168.80px;top:80.26px;font-size:7.2px;line-height:8.28px;color:#d8d8d8;transform:scaleX(1.0000);transform-origin:0 50%;">0</div>
<div class="t" style="left:248.80px;top:80.26px;font-size:7.2px;line-height:8.28px;color:#d8d8d8;transform:scaleX(1.0000);transform-origin:0 50%;">100</div>
<div class="t" style="left:328.80px;top:80.26px;font-size:7.2px;line-height:8.28px;color:#d8d8d8;transform:scaleX(1.0000);transform-origin:0 50%;">200</div>
<div class="t" style="left:408.80px;top:80.26px;font-size:7.2px;line-height:8.28px;color:#d8d8d8;transform:scaleX(1.0000);transform-origin:0 50%;">300</div>
<div class="t" style="left:488.80px;top:80.26px;font-size:7.2px;line-height:8.28px;color:#d8d8d8;transform:scaleX(1.0000);transform-origin:0 50%;">400</div>
<div class="t" style="left:568.80px;top:80.26px;font-size:7.2px;line-height:8.28px;color:#d8d8d8;transform:scaleX(1.0000);transform-origin:0 50%;">500</div>
<div class="t" style="left:648.80px;top:80.26px;font-size:7.2px;line-height:8.28px;color:#d8d8d8;transform:scaleX(1.0000);transform-origin:0 50%;">600</div>
<div class="t" style="left:728.80px;top:80.26px;font-size:7.2px;line-height:8.28px;color:#d8d8d8;transform:scaleX(1.0000);transform-origin:0 50%;">700</div>
<div class="t" style="left:808.80px;top:80.26px;font-size:7.2px;line-height:8.28px;color:#d8d8d8;transform:scaleX(1.0000);transform-origin:0 50%;">800</div>
<div class="t" style="left:155.00px;top:103.16px;font-size:7.2px;line-height:8.28px;color:#d8d8d8;transform:scaleX(1.0000);transform-origin:0 50%;">0</div>
<div class="t" style="left:155.00px;top:183.16px;font-size:7.2px;line-height:8.28px;color:#d8d8d8;transform:scaleX(1.0000);transform-origin:0 50%;">1</div>
<div class="t" style="left:155.00px;top:190.36px;font-size:7.2px;line-height:8.28px;color:#d8d8d8;transform:scaleX(1.0000);transform-origin:0 50%;">0</div>
<div class="t" style="left:155.00px;top:197.56px;font-size:7.2px;line-height:8.28px;color:#d8d8d8;transform:scaleX(1.0000);transform-origin:0 50%;">0</div>
<div class="t" style="left:155.00px;top:263.16px;font-size:7.2px;line-height:8.28px;color:#d8d8d8;transform:scaleX(1.0000);transform-origin:0 50%;">2</div>
<div class="t" style="left:155.00px;top:270.36px;font-size:7.2px;line-height:8.28px;color:#d8d8d8;transform:scaleX(1.0000);transform-origin:0 50%;">0</div>
<div class="t" style="left:155.00px;top:277.56px;font-size:7.2px;line-height:8.28px;color:#d8d8d8;transform:scaleX(1.0000);transform-origin:0 50%;">0</div>
<div class="t" style="left:155.00px;top:343.16px;font-size:7.2px;line-height:8.28px;color:#d8d8d8;transform:scaleX(1.0000);transform-origin:0 50%;">3</div>
<div class="t" style="left:155.00px;top:350.36px;font-size:7.2px;line-height:8.28px;color:#d8d8d8;transform:scaleX(1.0000);transform-origin:0 50%;">0</div>
<div class="t" style="left:155.00px;top:357.56px;font-size:7.2px;line-height:8.28px;color:#d8d8d8;transform:scaleX(1.0000);transform-origin:0 50%;">0</div>
<div class="t" style="left:155.00px;top:423.16px;font-size:7.2px;line-height:8.28px;color:#d8d8d8;transform:scaleX(1.0000);transform-origin:0 50%;">4</div>
<div class="t" style="left:155.00px;top:430.36px;font-size:7.2px;line-height:8.28px;color:#d8d8d8;transform:scaleX(1.0000);transform-origin:0 50%;">0</div>
<div class="t" style="left:155.00px;top:437.56px;font-size:7.2px;line-height:8.28px;color:#d8d8d8;transform:scaleX(1.0000);transform-origin:0 50%;">0</div>
<div class="t" style="left:155.00px;top:503.16px;font-size:7.2px;line-height:8.28px;color:#d8d8d8;transform:scaleX(1.0000);transform-origin:0 50%;">5</div>
<div class="t" style="left:155.00px;top:510.36px;font-size:7.2px;line-height:8.28px;color:#d8d8d8;transform:scaleX(1.0000);transform-origin:0 50%;">0</div>
<div class="t" style="left:155.00px;top:517.56px;font-size:7.2px;line-height:8.28px;color:#d8d8d8;transform:scaleX(1.0000);transform-origin:0 50%;">0</div>
<svg style="left:166.4px;top:102.2px" width="679.2" height="452.8" viewBox="166.4 102.2 679.2 452.8">
<defs>
<pattern id="chk" x="165.63" y="101.52" width="12.8" height="12.8" patternUnits="userSpaceOnUse"><rect width="12.8" height="12.8" fill="#676767"/><rect width="6.4" height="6.4" fill="#999999"/><rect x="6.4" y="6.4" width="6.4" height="6.4" fill="#999999"/></pattern>
<filter id="b05" x="-10%" y="-10%" width="120%" height="120%"><feGaussianBlur stdDeviation="0.5"/></filter>
<filter id="b1" x="-20%" y="-20%" width="140%" height="140%"><feGaussianBlur stdDeviation="1"/></filter>
<filter id="b2" x="-30%" y="-30%" width="160%" height="160%"><feGaussianBlur stdDeviation="2"/></filter>
<filter id="b4" x="-40%" y="-40%" width="180%" height="180%"><feGaussianBlur stdDeviation="4"/></filter>
<filter id="b8" x="-50%" y="-50%" width="200%" height="200%"><feGaussianBlur stdDeviation="8"/></filter>
<clipPath id="imgclip"><rect x="167.2" y="102.7" width="677.6" height="451.6"/></clipPath>
</defs>
<rect x="166.4" y="102.2" width="679.2" height="452.8" fill="#0c0c0c"/>
<rect x="166.9" y="102.7" width="678.2" height="451.8" fill="none" stroke="#f6ee28" stroke-width="1.2" stroke-dasharray="3.2 3.2"/>
<rect x="167.4" y="103.3" width="677.2" height="450.6" fill="#fae476"/>
<g clip-path="url(#imgclip)">
<clipPath id="shclip"><path d="M435.2,270.7 C432.4,270.1 434.9,271.0 427.0,274.8 C419.1,278.6 416.3,281.5 405.4,285.0 C394.5,288.5 395.2,285.5 386.2,287.8 C377.2,290.1 377.6,290.1 371.8,293.5 C366.0,296.9 369.1,294.9 364.6,300.7 C360.1,306.5 360.7,306.1 354.9,315.1 C349.1,324.1 349.3,324.1 342.9,334.4 C336.5,344.7 336.3,345.1 330.9,353.6 C325.5,362.1 324.2,361.2 322.8,366.4 C321.4,371.6 323.3,369.0 325.5,373.0 C327.7,377.0 326.9,375.9 330.9,381.3 C334.9,386.7 336.0,389.1 340.5,393.3 C345.0,397.5 343.5,397.0 347.7,397.0 C351.9,397.0 351.0,395.5 356.1,393.3 C361.2,391.1 363.1,389.3 367.0,388.7 C370.9,388.1 368.4,387.5 370.6,391.0 C372.8,394.5 373.2,394.7 375.4,401.7 C377.6,408.7 377.1,408.6 379.0,417.3 C380.9,426.0 381.4,425.2 382.6,434.2 C383.8,443.2 383.2,442.0 383.4,451.0 C383.6,460.0 382.2,460.1 383.2,468.0 C384.2,475.9 383.8,475.6 387.2,480.5 C390.6,485.4 391.9,484.7 396.0,486.4 C400.1,488.1 399.0,485.9 402.6,486.8 C406.2,487.7 405.6,486.8 409.6,489.7 C413.6,492.6 414.1,493.4 417.5,497.7 C420.9,502.0 421.0,500.9 422.5,505.7 C424.0,510.5 423.4,510.3 423.1,515.6 C422.8,520.9 423.8,521.6 421.5,525.6 C419.2,529.6 417.8,528.7 414.6,530.5 C411.4,532.3 414.3,532.7 409.6,532.5 C404.9,532.3 401.5,527.3 397.0,529.6 C392.5,531.9 394.8,534.5 392.6,541.0 C390.4,547.5 390.4,543.6 388.6,554.0 C386.8,564.4 338.2,573.1 386.0,580.0 C433.8,586.9 520.2,586.9 568.0,580.0 C615.8,573.1 566.6,567.1 565.4,554.0 C564.2,540.9 565.6,537.7 563.6,531.0 C561.6,524.3 561.7,529.5 558.0,529.0 C554.3,528.5 555.5,530.1 549.6,529.2 C543.7,528.3 542.2,528.0 535.7,525.7 C529.2,523.4 529.4,524.2 525.2,520.5 C521.0,516.8 520.9,516.0 520.0,511.8 C519.1,507.6 518.5,509.0 521.8,504.8 C525.1,500.6 530.4,500.3 532.2,496.1 C534.0,491.9 527.3,492.2 528.7,489.2 C530.1,486.2 532.0,486.3 537.4,485.0 C542.8,483.7 544.8,489.8 549.0,484.4 C553.2,479.0 550.6,476.5 553.1,464.8 C555.6,453.1 555.1,455.3 558.3,440.5 C561.5,425.7 561.5,424.9 565.2,409.2 C568.9,393.5 568.0,388.1 572.2,381.6 C576.4,375.1 575.8,381.6 580.9,384.8 C586.0,388.0 587.0,390.1 591.3,393.5 C595.6,396.9 593.3,397.3 597.0,397.6 C600.7,397.9 600.6,397.9 605.0,394.5 C609.4,391.1 609.3,391.3 613.5,384.9 C617.7,378.5 618.7,376.8 620.9,370.4 C623.1,364.0 624.2,367.8 621.9,360.8 C619.6,353.8 617.4,353.6 612.3,344.0 C607.2,334.4 607.8,334.3 602.7,324.7 C597.6,315.1 598.8,316.2 593.0,307.9 C587.2,299.6 586.8,299.2 581.0,293.5 C575.2,287.8 577.2,289.2 571.4,286.6 C565.6,284.0 567.7,286.5 559.4,283.9 C551.1,281.3 547.9,279.6 540.1,276.8 C532.3,274.0 535.3,275.5 530.2,273.4 C525.1,271.3 524.2,268.6 520.8,269.0 C517.4,269.4 520.4,271.4 517.3,274.8 C514.2,278.2 513.8,278.8 509.1,281.9 C504.4,285.0 505.3,284.6 499.7,286.6 C494.1,288.6 494.2,288.4 488.0,289.5 C481.8,290.6 482.6,290.7 476.3,290.7 C470.0,290.7 470.8,290.6 464.5,289.5 C458.2,288.4 458.4,288.6 452.8,286.6 C447.2,284.6 447.5,284.4 443.4,281.9 C439.3,279.4 439.8,280.2 437.6,277.2 C435.4,274.2 438.0,271.3 435.2,270.7 Z"/></clipPath>
<clipPath id="lac"><path d="M350.0,366.0 C340.3,361.7 332.8,364.3 323.7,368.0 C314.6,371.7 319.9,371.3 315.8,380.0 C311.7,388.7 310.5,393.2 308.3,400.7 C306.1,408.2 306.8,402.9 307.5,408.0 C308.2,413.1 308.6,414.0 310.8,419.8 C313.0,425.6 311.7,422.8 315.8,429.8 C319.9,436.8 319.4,436.7 326.0,446.2 C332.6,455.7 332.8,455.1 340.5,465.4 C348.2,475.7 348.2,475.7 355.0,484.7 C361.8,493.7 362.1,492.9 366.0,499.0 C369.9,505.1 367.2,502.1 369.8,507.6 C372.4,513.1 372.1,514.6 375.8,519.6 C379.5,524.6 378.4,524.1 383.7,526.5 C389.0,528.9 388.8,526.9 395.7,528.5 C402.6,530.1 404.6,532.0 409.6,532.5 C414.6,533.0 411.4,532.3 414.6,530.5 C417.8,528.7 419.2,529.6 421.5,525.6 C423.8,521.6 422.8,520.9 423.1,515.6 C423.4,510.3 424.0,510.5 422.5,505.7 C421.0,500.9 420.9,502.0 417.5,497.7 C414.1,493.4 413.6,492.6 409.6,489.7 C405.6,486.8 406.3,487.2 402.6,486.8 C398.9,486.4 399.3,488.9 395.7,488.2 C392.1,487.5 391.9,486.9 389.0,484.0 C386.1,481.1 388.9,483.7 385.0,477.5 C381.1,471.3 380.3,470.2 374.2,460.6 C368.1,451.0 368.2,451.4 362.1,441.4 C356.0,431.4 355.6,430.6 351.4,423.1 C347.2,415.6 348.2,418.3 346.4,413.2 C344.6,408.1 344.5,408.3 344.8,404.0 C345.1,399.7 343.6,402.3 347.7,397.0 C351.8,391.7 359.4,392.3 360.0,384.0 C360.6,375.7 359.7,370.3 350.0,366.0 Z"/></clipPath><clipPath id="rac"><path d="M596.0,366.0 C605.3,362.5 613.6,367.2 622.7,370.9 C631.8,374.6 626.5,373.3 630.3,380.0 C634.1,386.7 634.8,388.1 636.9,395.9 C639.0,403.7 638.9,401.8 638.2,409.2 C637.5,416.6 637.5,415.3 634.3,423.8 C631.1,432.3 630.9,431.5 626.3,441.0 C621.7,450.5 622.6,449.5 617.0,459.6 C611.4,469.7 613.1,467.1 605.3,478.7 C597.5,490.3 594.4,494.1 587.9,503.1 C581.4,512.1 584.2,507.9 580.9,512.5 C577.6,517.1 580.3,516.5 575.7,520.5 C571.1,524.5 570.5,525.2 563.5,527.5 C556.5,529.8 557.0,529.7 549.6,529.2 C542.2,528.7 542.2,528.0 535.7,525.7 C529.2,523.4 529.4,524.2 525.2,520.5 C521.0,516.8 520.9,516.0 520.0,511.8 C519.1,507.6 518.5,509.0 521.8,504.8 C525.1,500.6 530.4,500.3 532.2,496.1 C534.0,491.9 527.3,492.2 528.7,489.2 C530.1,486.2 530.9,485.5 537.4,485.0 C543.9,484.5 547.0,485.5 553.0,487.4 C559.0,489.3 556.7,491.5 560.0,492.0 C563.3,492.5 561.0,494.6 565.2,489.2 C569.4,483.8 571.1,479.7 575.7,471.8 C580.3,463.9 578.6,467.8 582.5,459.6 C586.4,451.4 586.2,450.5 590.5,441.0 C594.8,431.5 595.3,432.3 598.5,423.8 C601.7,415.3 601.7,415.9 602.4,409.2 C603.1,402.5 604.9,405.3 601.1,398.6 C597.3,391.9 589.4,392.7 588.0,384.0 C586.6,375.3 586.7,369.5 596.0,366.0 Z"/></clipPath>
<g filter="url(#b05)"><path d="M350.0,366.0 C340.3,361.7 332.8,364.3 323.7,368.0 C314.6,371.7 319.9,371.3 315.8,380.0 C311.7,388.7 310.5,393.2 308.3,400.7 C306.1,408.2 306.8,402.9 307.5,408.0 C308.2,413.1 308.6,414.0 310.8,419.8 C313.0,425.6 311.7,422.8 315.8,429.8 C319.9,436.8 319.4,436.7 326.0,446.2 C332.6,455.7 332.8,455.1 340.5,465.4 C348.2,475.7 348.2,475.7 355.0,484.7 C361.8,493.7 362.1,492.9 366.0,499.0 C369.9,505.1 367.2,502.1 369.8,507.6 C372.4,513.1 372.1,514.6 375.8,519.6 C379.5,524.6 378.4,524.1 383.7,526.5 C389.0,528.9 388.8,526.9 395.7,528.5 C402.6,530.1 404.6,532.0 409.6,532.5 C414.6,533.0 411.4,532.3 414.6,530.5 C417.8,528.7 419.2,529.6 421.5,525.6 C423.8,521.6 422.8,520.9 423.1,515.6 C423.4,510.3 424.0,510.5 422.5,505.7 C421.0,500.9 420.9,502.0 417.5,497.7 C414.1,493.4 413.6,492.6 409.6,489.7 C405.6,486.8 406.3,487.2 402.6,486.8 C398.9,486.4 399.3,488.9 395.7,488.2 C392.1,487.5 391.9,486.9 389.0,484.0 C386.1,481.1 388.9,483.7 385.0,477.5 C381.1,471.3 380.3,470.2 374.2,460.6 C368.1,451.0 368.2,451.4 362.1,441.4 C356.0,431.4 355.6,430.6 351.4,423.1 C347.2,415.6 348.2,418.3 346.4,413.2 C344.6,408.1 344.5,408.3 344.8,404.0 C345.1,399.7 343.6,402.3 347.7,397.0 C351.8,391.7 359.4,392.3 360.0,384.0 C360.6,375.7 359.7,370.3 350.0,366.0 Z" fill="#e0a268"/><path d="M596.0,366.0 C605.3,362.5 613.6,367.2 622.7,370.9 C631.8,374.6 626.5,373.3 630.3,380.0 C634.1,386.7 634.8,388.1 636.9,395.9 C639.0,403.7 638.9,401.8 638.2,409.2 C637.5,416.6 637.5,415.3 634.3,423.8 C631.1,432.3 630.9,431.5 626.3,441.0 C621.7,450.5 622.6,449.5 617.0,459.6 C611.4,469.7 613.1,467.1 605.3,478.7 C597.5,490.3 594.4,494.1 587.9,503.1 C581.4,512.1 584.2,507.9 580.9,512.5 C577.6,517.1 580.3,516.5 575.7,520.5 C571.1,524.5 570.5,525.2 563.5,527.5 C556.5,529.8 557.0,529.7 549.6,529.2 C542.2,528.7 542.2,528.0 535.7,525.7 C529.2,523.4 529.4,524.2 525.2,520.5 C521.0,516.8 520.9,516.0 520.0,511.8 C519.1,507.6 518.5,509.0 521.8,504.8 C525.1,500.6 530.4,500.3 532.2,496.1 C534.0,491.9 527.3,492.2 528.7,489.2 C530.1,486.2 530.9,485.5 537.4,485.0 C543.9,484.5 547.0,485.5 553.0,487.4 C559.0,489.3 556.7,491.5 560.0,492.0 C563.3,492.5 561.0,494.6 565.2,489.2 C569.4,483.8 571.1,479.7 575.7,471.8 C580.3,463.9 578.6,467.8 582.5,459.6 C586.4,451.4 586.2,450.5 590.5,441.0 C594.8,431.5 595.3,432.3 598.5,423.8 C601.7,415.3 601.7,415.9 602.4,409.2 C603.1,402.5 604.9,405.3 601.1,398.6 C597.3,391.9 589.4,392.7 588.0,384.0 C586.6,375.3 586.7,369.5 596.0,366.0 Z" fill="#d49866"/></g>
<g clip-path="url(#lac)"><path d="M330,380 L348,397 L346,412 L352,424 L364,444 L380,470 L392,490" fill="none" stroke="#b06e44" stroke-width="15" opacity="0.9" filter="url(#b4)"/><path d="M324,368 L336,388 L347,397" fill="none" stroke="#a86a44" stroke-width="5" opacity="0.5" filter="url(#b2)"/><path d="M318,378 L309,402 L310,418 L324,444 L352,482 L368,502" fill="none" stroke="#f8cc92" stroke-width="17" opacity="1" filter="url(#b4)"/><path d="M322,372 L309,402 L311,418 L326,446 L354,484" fill="none" stroke="#d8a070" stroke-width="1.6" opacity="0.6" filter="url(#b1)"/><ellipse cx="376" cy="496" rx="12" ry="9" fill="#d6a070" opacity="0.7" filter="url(#b2)"/><ellipse cx="394" cy="511" rx="22" ry="17" fill="#f2caa2" opacity="0.95" filter="url(#b2)"/></g>
<g clip-path="url(#rac)"><path d="M626,372 L637,396 L638,410 L632,428 L614,462 L590,498" fill="none" stroke="#efbe88" stroke-width="9" opacity="0.95" filter="url(#b2)"/><path d="M603,398 L603,410 L598,424 L588,446 L572,476 L560,494" fill="none" stroke="#e0a672" stroke-width="6" opacity="0.7" filter="url(#b2)"/><path d="M620,372 L600,398" fill="none" stroke="#a86a44" stroke-width="6" opacity="0.5" filter="url(#b2)"/><ellipse cx="566" cy="498" rx="12" ry="9" fill="#d6a070" opacity="0.6" filter="url(#b2)"/><ellipse cx="546" cy="508" rx="24" ry="17" fill="#f2caa2" opacity="0.95" filter="url(#b2)"/></g>
<defs><linearGradient id="nkg" gradientUnits="userSpaceOnUse" x1="438" y1="0" x2="518" y2="0"><stop offset="0" stop-color="#f0bc7e"/><stop offset="0.25" stop-color="#edb678"/><stop offset="0.5" stop-color="#e6aa6c"/><stop offset="0.8" stop-color="#ecb476"/><stop offset="1" stop-color="#dfa066"/></linearGradient></defs>
<path d="M470.0,226.0 C456.7,226.5 455.2,228.3 449.0,232.0 C442.8,235.7 447.3,236.1 446.8,240.0 C446.3,243.9 446.8,241.8 447.0,246.7 C447.2,251.6 448.5,253.1 447.5,258.4 C446.5,263.7 446.7,263.3 443.4,266.6 C440.1,269.9 436.7,267.9 435.2,270.7 C433.7,273.5 435.4,274.2 437.6,277.2 C439.8,280.2 439.3,279.4 443.4,281.9 C447.5,284.4 447.2,284.6 452.8,286.6 C458.4,288.6 458.2,288.4 464.5,289.5 C470.8,290.6 470.0,290.7 476.3,290.7 C482.6,290.7 481.8,290.6 488.0,289.5 C494.2,288.4 494.1,288.6 499.7,286.6 C505.3,284.6 504.4,285.0 509.1,281.9 C513.8,278.8 514.2,278.2 517.3,274.8 C520.4,271.4 521.1,271.2 520.8,269.0 C520.5,266.8 519.2,269.4 516.1,266.6 C513.0,263.8 512.2,263.7 509.1,258.4 C506.0,253.1 506.2,252.1 504.4,246.7 C502.6,241.3 503.8,242.5 502.4,238.0 C501.0,233.5 507.6,233.2 499.0,230.0 C490.4,226.8 483.3,225.5 470.0,226.0 Z" fill="url(#nkg)" filter="url(#b05)"/>
<clipPath id="nkc"><path d="M470.0,226.0 C456.7,226.5 455.2,228.3 449.0,232.0 C442.8,235.7 447.3,236.1 446.8,240.0 C446.3,243.9 446.8,241.8 447.0,246.7 C447.2,251.6 448.5,253.1 447.5,258.4 C446.5,263.7 446.7,263.3 443.4,266.6 C440.1,269.9 436.7,267.9 435.2,270.7 C433.7,273.5 435.4,274.2 437.6,277.2 C439.8,280.2 439.3,279.4 443.4,281.9 C447.5,284.4 447.2,284.6 452.8,286.6 C458.4,288.6 458.2,288.4 464.5,289.5 C470.8,290.6 470.0,290.7 476.3,290.7 C482.6,290.7 481.8,290.6 488.0,289.5 C494.2,288.4 494.1,288.6 499.7,286.6 C505.3,284.6 504.4,285.0 509.1,281.9 C513.8,278.8 514.2,278.2 517.3,274.8 C520.4,271.4 521.1,271.2 520.8,269.0 C520.5,266.8 519.2,269.4 516.1,266.6 C513.0,263.8 512.2,263.7 509.1,258.4 C506.0,253.1 506.2,252.1 504.4,246.7 C502.6,241.3 503.8,242.5 502.4,238.0 C501.0,233.5 507.6,233.2 499.0,230.0 C490.4,226.8 483.3,225.5 470.0,226.0 Z"/></clipPath>
<g clip-path="url(#nkc)"><ellipse cx="470" cy="247" rx="26" ry="9" fill="#cf9a6c" opacity="0.7" filter="url(#b2)"/><ellipse cx="472" cy="259" rx="6" ry="7" fill="#c88a68" opacity="0.7" filter="url(#b2)"/><path d="M437,272 C450,290 500,292 520,270" fill="none" stroke="#d49a66" stroke-width="3" opacity="0.7" filter="url(#b1)"/><path d="M450,236 L452,270" stroke="#f6cf9c" stroke-width="5" opacity="0.5" filter="url(#b2)"/><path d="M500,228 L505,246 L512,262 L520,270" fill="none" stroke="#c48854" stroke-width="7" opacity="0.6" filter="url(#b2)"/><path d="M447,238 C460,256 490,256 502,236" fill="none" stroke="#c88e5c" stroke-width="5" opacity="0.5" filter="url(#b2)"/></g>
<path d="M435.2,270.7 C432.4,270.1 434.9,271.0 427.0,274.8 C419.1,278.6 416.3,281.5 405.4,285.0 C394.5,288.5 395.2,285.5 386.2,287.8 C377.2,290.1 377.6,290.1 371.8,293.5 C366.0,296.9 369.1,294.9 364.6,300.7 C360.1,306.5 360.7,306.1 354.9,315.1 C349.1,324.1 349.3,324.1 342.9,334.4 C336.5,344.7 336.3,345.1 330.9,353.6 C325.5,362.1 324.2,361.2 322.8,366.4 C321.4,371.6 323.3,369.0 325.5,373.0 C327.7,377.0 326.9,375.9 330.9,381.3 C334.9,386.7 336.0,389.1 340.5,393.3 C345.0,397.5 343.5,397.0 347.7,397.0 C351.9,397.0 351.0,395.5 356.1,393.3 C361.2,391.1 363.1,389.3 367.0,388.7 C370.9,388.1 368.4,387.5 370.6,391.0 C372.8,394.5 373.2,394.7 375.4,401.7 C377.6,408.7 377.1,408.6 379.0,417.3 C380.9,426.0 381.4,425.2 382.6,434.2 C383.8,443.2 383.2,442.0 383.4,451.0 C383.6,460.0 382.2,460.1 383.2,468.0 C384.2,475.9 383.8,475.6 387.2,480.5 C390.6,485.4 391.9,484.7 396.0,486.4 C400.1,488.1 399.0,485.9 402.6,486.8 C406.2,487.7 405.6,486.8 409.6,489.7 C413.6,492.6 414.1,493.4 417.5,497.7 C420.9,502.0 421.0,500.9 422.5,505.7 C424.0,510.5 423.4,510.3 423.1,515.6 C422.8,520.9 423.8,521.6 421.5,525.6 C419.2,529.6 417.8,528.7 414.6,530.5 C411.4,532.3 414.3,532.7 409.6,532.5 C404.9,532.3 401.5,527.3 397.0,529.6 C392.5,531.9 394.8,534.5 392.6,541.0 C390.4,547.5 390.4,543.6 388.6,554.0 C386.8,564.4 338.2,573.1 386.0,580.0 C433.8,586.9 520.2,586.9 568.0,580.0 C615.8,573.1 566.6,567.1 565.4,554.0 C564.2,540.9 565.6,537.7 563.6,531.0 C561.6,524.3 561.7,529.5 558.0,529.0 C554.3,528.5 555.5,530.1 549.6,529.2 C543.7,528.3 542.2,528.0 535.7,525.7 C529.2,523.4 529.4,524.2 525.2,520.5 C521.0,516.8 520.9,516.0 520.0,511.8 C519.1,507.6 518.5,509.0 521.8,504.8 C525.1,500.6 530.4,500.3 532.2,496.1 C534.0,491.9 527.3,492.2 528.7,489.2 C530.1,486.2 532.0,486.3 537.4,485.0 C542.8,483.7 544.8,489.8 549.0,484.4 C553.2,479.0 550.6,476.5 553.1,464.8 C555.6,453.1 555.1,455.3 558.3,440.5 C561.5,425.7 561.5,424.9 565.2,409.2 C568.9,393.5 568.0,388.1 572.2,381.6 C576.4,375.1 575.8,381.6 580.9,384.8 C586.0,388.0 587.0,390.1 591.3,393.5 C595.6,396.9 593.3,397.3 597.0,397.6 C600.7,397.9 600.6,397.9 605.0,394.5 C609.4,391.1 609.3,391.3 613.5,384.9 C617.7,378.5 618.7,376.8 620.9,370.4 C623.1,364.0 624.2,367.8 621.9,360.8 C619.6,353.8 617.4,353.6 612.3,344.0 C607.2,334.4 607.8,334.3 602.7,324.7 C597.6,315.1 598.8,316.2 593.0,307.9 C587.2,299.6 586.8,299.2 581.0,293.5 C575.2,287.8 577.2,289.2 571.4,286.6 C565.6,284.0 567.7,286.5 559.4,283.9 C551.1,281.3 547.9,279.6 540.1,276.8 C532.3,274.0 535.3,275.5 530.2,273.4 C525.1,271.3 524.2,268.6 520.8,269.0 C517.4,269.4 520.4,271.4 517.3,274.8 C514.2,278.2 513.8,278.8 509.1,281.9 C504.4,285.0 505.3,284.6 499.7,286.6 C494.1,288.6 494.2,288.4 488.0,289.5 C481.8,290.6 482.6,290.7 476.3,290.7 C470.0,290.7 470.8,290.6 464.5,289.5 C458.2,288.4 458.4,288.6 452.8,286.6 C447.2,284.6 447.5,284.4 443.4,281.9 C439.3,279.4 439.8,280.2 437.6,277.2 C435.4,274.2 438.0,271.3 435.2,270.7 Z" fill="url(#chk)"/>
<g clip-path="url(#shclip)">
<path d="M435.2,270.7 C432.4,270.1 434.9,271.0 427.0,274.8 C419.1,278.6 416.3,281.5 405.4,285.0 C394.5,288.5 395.2,285.5 386.2,287.8 C377.2,290.1 377.6,290.1 371.8,293.5 C366.0,296.9 369.1,294.9 364.6,300.7 C360.1,306.5 360.7,306.1 354.9,315.1 C349.1,324.1 349.3,324.1 342.9,334.4 C336.5,344.7 336.3,345.1 330.9,353.6 C325.5,362.1 324.2,361.2 322.8,366.4 C321.4,371.6 323.3,369.0 325.5,373.0 C327.7,377.0 326.9,375.9 330.9,381.3 C334.9,386.7 336.0,389.1 340.5,393.3 C345.0,397.5 343.5,397.0 347.7,397.0 C351.9,397.0 351.0,395.5 356.1,393.3 C361.2,391.1 363.1,389.3 367.0,388.7 C370.9,388.1 368.4,387.5 370.6,391.0 C372.8,394.5 373.2,394.7 375.4,401.7 C377.6,408.7 377.1,408.6 379.0,417.3 C380.9,426.0 381.4,425.2 382.6,434.2 C383.8,443.2 383.2,442.0 383.4,451.0 C383.6,460.0 382.2,460.1 383.2,468.0 C384.2,475.9 383.8,475.6 387.2,480.5 C390.6,485.4 391.9,484.7 396.0,486.4 C400.1,488.1 399.0,485.9 402.6,486.8 C406.2,487.7 405.6,486.8 409.6,489.7 C413.6,492.6 414.1,493.4 417.5,497.7 C420.9,502.0 421.0,500.9 422.5,505.7 C424.0,510.5 423.4,510.3 423.1,515.6 C422.8,520.9 423.8,521.6 421.5,525.6 C419.2,529.6 417.8,528.7 414.6,530.5 C411.4,532.3 414.3,532.7 409.6,532.5 C404.9,532.3 401.5,527.3 397.0,529.6 C392.5,531.9 394.8,534.5 392.6,541.0 C390.4,547.5 390.4,543.6 388.6,554.0 C386.8,564.4 338.2,573.1 386.0,580.0 C433.8,586.9 520.2,586.9 568.0,580.0 C615.8,573.1 566.6,567.1 565.4,554.0 C564.2,540.9 565.6,537.7 563.6,531.0 C561.6,524.3 561.7,529.5 558.0,529.0 C554.3,528.5 555.5,530.1 549.6,529.2 C543.7,528.3 542.2,528.0 535.7,525.7 C529.2,523.4 529.4,524.2 525.2,520.5 C521.0,516.8 520.9,516.0 520.0,511.8 C519.1,507.6 518.5,509.0 521.8,504.8 C525.1,500.6 530.4,500.3 532.2,496.1 C534.0,491.9 527.3,492.2 528.7,489.2 C530.1,486.2 532.0,486.3 537.4,485.0 C542.8,483.7 544.8,489.8 549.0,484.4 C553.2,479.0 550.6,476.5 553.1,464.8 C555.6,453.1 555.1,455.3 558.3,440.5 C561.5,425.7 561.5,424.9 565.2,409.2 C568.9,393.5 568.0,388.1 572.2,381.6 C576.4,375.1 575.8,381.6 580.9,384.8 C586.0,388.0 587.0,390.1 591.3,393.5 C595.6,396.9 593.3,397.3 597.0,397.6 C600.7,397.9 600.6,397.9 605.0,394.5 C609.4,391.1 609.3,391.3 613.5,384.9 C617.7,378.5 618.7,376.8 620.9,370.4 C623.1,364.0 624.2,367.8 621.9,360.8 C619.6,353.8 617.4,353.6 612.3,344.0 C607.2,334.4 607.8,334.3 602.7,324.7 C597.6,315.1 598.8,316.2 593.0,307.9 C587.2,299.6 586.8,299.2 581.0,293.5 C575.2,287.8 577.2,289.2 571.4,286.6 C565.6,284.0 567.7,286.5 559.4,283.9 C551.1,281.3 547.9,279.6 540.1,276.8 C532.3,274.0 535.3,275.5 530.2,273.4 C525.1,271.3 524.2,268.6 520.8,269.0 C517.4,269.4 520.4,271.4 517.3,274.8 C514.2,278.2 513.8,278.8 509.1,281.9 C504.4,285.0 505.3,284.6 499.7,286.6 C494.1,288.6 494.2,288.4 488.0,289.5 C481.8,290.6 482.6,290.7 476.3,290.7 C470.0,290.7 470.8,290.6 464.5,289.5 C458.2,288.4 458.4,288.6 452.8,286.6 C447.2,284.6 447.5,284.4 443.4,281.9 C439.3,279.4 439.8,280.2 437.6,277.2 C435.4,274.2 438.0,271.3 435.2,270.7 Z" fill="#faf5d6" opacity="0.15" filter="url(#b8)"/>
<ellipse cx="478" cy="445" rx="62" ry="85" fill="#faf5d6" opacity="0.17" filter="url(#b8)"/>
<path d="M322,366 L372,292 L386,298 L348,396 Z" fill="#1a1a1a" opacity="0.08" filter="url(#b4)"/>
<path d="M622,366 L578,292 L566,298 L598,398 Z" fill="#1a1a1a" opacity="0.08" filter="url(#b4)"/>
<g fill="none" stroke="#e9d2b8" stroke-linecap="round" filter="url(#b2)"><path d="M370,392 C372,360 380,330 392,300" stroke-width="5" opacity="0.5"/><path d="M372,394 C380,420 384,450 385,478" stroke-width="6" opacity="0.55"/><path d="M352,394 C362,380 366,360 372,336" stroke-width="4" opacity="0.35"/><path d="M574,384 C570,360 566,340 556,316" stroke-width="5" opacity="0.5"/><path d="M571,386 C564,420 556,450 551,482" stroke-width="5" opacity="0.5"/><path d="M430,330 C428,380 430,430 434,470" stroke-width="3" opacity="0.3"/><path d="M392,440 C400,470 398,520 394,552" stroke-width="7" opacity="0.35"/></g>
<g fill="none" stroke="#2a2a2a" stroke-linecap="round" filter="url(#b2)"><path d="M398,400 C404,440 404,470 402,484" stroke-width="5" opacity="0.18"/><path d="M440,390 C442,440 444,470 442,500" stroke-width="4" opacity="0.12"/><path d="M548,400 C544,440 540,470 538,484" stroke-width="5" opacity="0.14"/></g>
</g>
<path d="M435.2,270.7 C432.4,270.1 434.9,271.0 427.0,274.8 C419.1,278.6 416.3,281.5 405.4,285.0 C394.5,288.5 395.2,285.5 386.2,287.8 C377.2,290.1 377.6,290.1 371.8,293.5 C366.0,296.9 369.1,294.9 364.6,300.7 C360.1,306.5 360.7,306.1 354.9,315.1 C349.1,324.1 349.3,324.1 342.9,334.4 C336.5,344.7 336.3,345.1 330.9,353.6 C325.5,362.1 324.2,361.2 322.8,366.4 C321.4,371.6 323.3,369.0 325.5,373.0 C327.7,377.0 326.9,375.9 330.9,381.3 C334.9,386.7 336.0,389.1 340.5,393.3 C345.0,397.5 343.5,397.0 347.7,397.0 C351.9,397.0 351.0,395.5 356.1,393.3 C361.2,391.1 363.1,389.3 367.0,388.7 C370.9,388.1 368.4,387.5 370.6,391.0 C372.8,394.5 373.2,394.7 375.4,401.7 C377.6,408.7 377.1,408.6 379.0,417.3 C380.9,426.0 381.4,425.2 382.6,434.2 C383.8,443.2 383.2,442.0 383.4,451.0 C383.6,460.0 382.2,460.1 383.2,468.0 C384.2,475.9 383.8,475.6 387.2,480.5 C390.6,485.4 391.9,484.7 396.0,486.4 C400.1,488.1 399.0,485.9 402.6,486.8 C406.2,487.7 405.6,486.8 409.6,489.7 C413.6,492.6 414.1,493.4 417.5,497.7 C420.9,502.0 421.0,500.9 422.5,505.7 C424.0,510.5 423.4,510.3 423.1,515.6 C422.8,520.9 423.8,521.6 421.5,525.6 C419.2,529.6 417.8,528.7 414.6,530.5 C411.4,532.3 414.3,532.7 409.6,532.5 C404.9,532.3 401.5,527.3 397.0,529.6 C392.5,531.9 394.8,534.5 392.6,541.0 C390.4,547.5 390.4,543.6 388.6,554.0 C386.8,564.4 338.2,573.1 386.0,580.0 C433.8,586.9 520.2,586.9 568.0,580.0 C615.8,573.1 566.6,567.1 565.4,554.0 C564.2,540.9 565.6,537.7 563.6,531.0 C561.6,524.3 561.7,529.5 558.0,529.0 C554.3,528.5 555.5,530.1 549.6,529.2 C543.7,528.3 542.2,528.0 535.7,525.7 C529.2,523.4 529.4,524.2 525.2,520.5 C521.0,516.8 520.9,516.0 520.0,511.8 C519.1,507.6 518.5,509.0 521.8,504.8 C525.1,500.6 530.4,500.3 532.2,496.1 C534.0,491.9 527.3,492.2 528.7,489.2 C530.1,486.2 532.0,486.3 537.4,485.0 C542.8,483.7 544.8,489.8 549.0,484.4 C553.2,479.0 550.6,476.5 553.1,464.8 C555.6,453.1 555.1,455.3 558.3,440.5 C561.5,425.7 561.5,424.9 565.2,409.2 C568.9,393.5 568.0,388.1 572.2,381.6 C576.4,375.1 575.8,381.6 580.9,384.8 C586.0,388.0 587.0,390.1 591.3,393.5 C595.6,396.9 593.3,397.3 597.0,397.6 C600.7,397.9 600.6,397.9 605.0,394.5 C609.4,391.1 609.3,391.3 613.5,384.9 C617.7,378.5 618.7,376.8 620.9,370.4 C623.1,364.0 624.2,367.8 621.9,360.8 C619.6,353.8 617.4,353.6 612.3,344.0 C607.2,334.4 607.8,334.3 602.7,324.7 C597.6,315.1 598.8,316.2 593.0,307.9 C587.2,299.6 586.8,299.2 581.0,293.5 C575.2,287.8 577.2,289.2 571.4,286.6 C565.6,284.0 567.7,286.5 559.4,283.9 C551.1,281.3 547.9,279.6 540.1,276.8 C532.3,274.0 535.3,275.5 530.2,273.4 C525.1,271.3 524.2,268.6 520.8,269.0 C517.4,269.4 520.4,271.4 517.3,274.8 C514.2,278.2 513.8,278.8 509.1,281.9 C504.4,285.0 505.3,284.6 499.7,286.6 C494.1,288.6 494.2,288.4 488.0,289.5 C481.8,290.6 482.6,290.7 476.3,290.7 C470.0,290.7 470.8,290.6 464.5,289.5 C458.2,288.4 458.4,288.6 452.8,286.6 C447.2,284.6 447.5,284.4 443.4,281.9 C439.3,279.4 439.8,280.2 437.6,277.2 C435.4,274.2 438.0,271.3 435.2,270.7 Z" fill="none" stroke="#e8dcc4" stroke-width="0.8" opacity="0.55"/>
<g filter="url(#b05)">
<defs><linearGradient id="lhg" gradientUnits="userSpaceOnUse" x1="370" y1="500" x2="412" y2="515"><stop offset="0" stop-color="#d8a472"/><stop offset="0.35" stop-color="#efc49a"/><stop offset="1" stop-color="#f4ceaa"/></linearGradient><linearGradient id="rhg" gradientUnits="userSpaceOnUse" x1="578" y1="505" x2="536" y2="512"><stop offset="0" stop-color="#d8a472"/><stop offset="0.35" stop-color="#efc49a"/><stop offset="1" stop-color="#f5d0ac"/></linearGradient></defs>
<path d="M370.5,504.0 C368.2,511.2 372.4,512.6 375.5,518.1 C378.6,523.6 376.5,522.0 382.0,524.6 C387.5,527.2 388.6,525.7 396.0,527.8 C403.4,529.9 404.7,531.9 409.6,532.5 C414.5,533.1 410.9,531.8 414.3,530.0 C417.7,528.2 420.1,529.4 422.4,525.7 C424.7,522.0 422.9,520.9 423.0,516.0 C423.1,511.1 423.8,511.3 422.9,507.3 C422.0,503.3 422.9,505.0 419.7,500.9 C416.5,496.8 415.6,496.0 411.0,492.0 C406.4,488.0 406.7,487.0 402.4,485.8 C398.1,484.6 399.9,486.0 395.0,487.4 C390.1,488.8 390.6,486.8 384.1,491.2 C377.6,495.6 372.8,496.8 370.5,504.0 Z" fill="url(#lhg)"/>
<path d="M401.4,496.6 L407.8,498.4 M397,507.3 L405.7,510 M394.9,517.6 L410,524.6" stroke="#6e3828" stroke-width="1.5" stroke-linecap="round" fill="none" opacity="0.9"/>
<path d="M407.8,498.4 L419.7,501.6 M405.7,510 L422.4,516.5" stroke="#b8b8b4" stroke-width="1.3" stroke-linecap="round" fill="none" opacity="0.9"/>
<path d="M402,486.6 C410,489 417,495 420.4,501" stroke="#c89870" stroke-width="0.9" fill="none" opacity="0.7"/>
<path d="M577.0,518.0 C577.7,522.9 579.3,518.0 575.7,520.5 C572.1,523.0 570.5,525.2 563.5,527.5 C556.5,529.8 557.0,529.7 549.6,529.2 C542.2,528.7 542.2,528.0 535.7,525.7 C529.2,523.4 529.4,524.2 525.2,520.5 C521.0,516.8 520.9,516.0 520.0,511.8 C519.1,507.6 518.5,509.0 521.8,504.8 C525.1,500.6 530.4,500.3 532.2,496.1 C534.0,491.9 527.3,492.2 528.7,489.2 C530.1,486.2 530.9,485.5 537.4,485.0 C543.9,484.5 546.2,485.4 553.0,487.4 C559.8,489.4 557.7,488.5 563.0,492.4 C568.3,496.3 569.3,495.2 573.0,502.0 C576.7,508.8 576.3,513.1 577.0,518.0 Z" fill="url(#rhg)"/>
<path d="M549,494.4 L533,497.2 M551,503.8 L528,510.4 M552,512.8 L531,519" stroke="#8a5038" stroke-width="1.3" stroke-linecap="round" fill="none" opacity="0.8"/>
<path d="M533,497.2 L529.6,498 M528,510.4 L523,512" stroke="#b8b8b4" stroke-width="1.2" stroke-linecap="round" fill="none" opacity="0.8"/>
</g>
<defs><linearGradient id="fcg" gradientUnits="userSpaceOnUse" x1="425" y1="0" x2="508" y2="0"><stop offset="0" stop-color="#e8b070"/><stop offset="0.25" stop-color="#f4c686"/><stop offset="0.6" stop-color="#f3c384"/><stop offset="1" stop-color="#e0a264"/></linearGradient></defs>
<path d="M424.0,170.0 C421.7,181.8 422.9,181.2 423.5,190.4 C424.1,199.6 425.2,197.9 426.1,204.4 C427.0,210.9 426.2,209.8 427.0,214.8 C427.8,219.8 427.6,219.3 429.0,223.0 C430.4,226.7 430.3,226.3 432.2,228.8 C434.1,231.3 433.0,229.2 436.0,232.5 C439.0,235.8 438.7,236.7 443.5,241.0 C448.3,245.3 447.0,245.6 454.0,248.8 C461.0,252.0 461.7,252.9 469.6,253.1 C477.5,253.3 477.1,252.9 483.6,249.7 C490.1,246.5 489.4,246.1 494.0,241.0 C498.6,235.9 498.0,237.2 501.0,230.5 C504.0,223.8 503.2,220.2 505.3,216.0 C507.4,211.8 506.2,216.5 508.8,214.8 C511.4,213.1 512.3,213.8 514.9,209.6 C517.5,205.4 518.4,204.8 518.4,199.2 C518.4,193.6 517.7,192.1 514.9,188.7 C512.1,185.3 510.1,191.4 508.0,186.4 C505.9,181.4 510.5,181.0 507.0,170.0 C503.5,159.0 507.5,154.3 495.0,145.0 C482.5,135.7 476.8,134.7 460.0,135.0 C443.2,135.3 441.6,136.7 432.0,146.0 C422.4,155.3 426.3,158.2 424.0,170.0 Z" fill="url(#fcg)" filter="url(#b05)"/>
<clipPath id="fcc"><path d="M424.0,170.0 C421.7,181.8 422.9,181.2 423.5,190.4 C424.1,199.6 425.2,197.9 426.1,204.4 C427.0,210.9 426.2,209.8 427.0,214.8 C427.8,219.8 427.6,219.3 429.0,223.0 C430.4,226.7 430.3,226.3 432.2,228.8 C434.1,231.3 433.0,229.2 436.0,232.5 C439.0,235.8 438.7,236.7 443.5,241.0 C448.3,245.3 447.0,245.6 454.0,248.8 C461.0,252.0 461.7,252.9 469.6,253.1 C477.5,253.3 477.1,252.9 483.6,249.7 C490.1,246.5 489.4,246.1 494.0,241.0 C498.6,235.9 498.0,237.2 501.0,230.5 C504.0,223.8 503.2,220.2 505.3,216.0 C507.4,211.8 506.2,216.5 508.8,214.8 C511.4,213.1 512.3,213.8 514.9,209.6 C517.5,205.4 518.4,204.8 518.4,199.2 C518.4,193.6 517.7,192.1 514.9,188.7 C512.1,185.3 510.1,191.4 508.0,186.4 C505.9,181.4 510.5,181.0 507.0,170.0 C503.5,159.0 507.5,154.3 495.0,145.0 C482.5,135.7 476.8,134.7 460.0,135.0 C443.2,135.3 441.6,136.7 432.0,146.0 C422.4,155.3 426.3,158.2 424.0,170.0 Z"/></clipPath>
<g clip-path="url(#fcc)">
<ellipse cx="460" cy="153" rx="34" ry="12" fill="#e9b276" opacity="0.45" filter="url(#b4)"/>
<ellipse cx="457" cy="152" rx="19" ry="7.5" fill="#fbdaa8" opacity="0.7" filter="url(#b2)"/>
<ellipse cx="444" cy="207" rx="9" ry="11" fill="#fcdca4" opacity="0.8" filter="url(#b4)"/>
<ellipse cx="487" cy="203" rx="9" ry="11" fill="#fad69c" opacity="0.7" filter="url(#b4)"/>
<ellipse cx="466" cy="240" rx="12" ry="6" fill="#f8d29a" opacity="0.6" filter="url(#b2)"/>
<path d="M428,222 C440,250 494,254 504,224 L506,262 L428,262 Z" fill="#d69c66" opacity="0.4" filter="url(#b2)"/>
<path d="M503,188 L505,226" stroke="#cc9260" stroke-width="5" opacity="0.55" filter="url(#b2)"/>
<path d="M425,180 L428,226" stroke="#d49c68" stroke-width="4" opacity="0.5" filter="url(#b2)"/>
<path d="M512.6,191.6 C516,197 515,205 510.6,210.6" stroke="#b87a50" stroke-width="2" fill="none" opacity="0.7" filter="url(#b1)"/>
<ellipse cx="513" cy="200" rx="3.4" ry="8" fill="#f0be8a" opacity="0.6" filter="url(#b1)"/>
<g filter="url(#b05)"><path d="M427.4,178.4 C432,173.6 440,171.2 447,171.4 L446.6,174.6 C439.4,174.4 433,176 428,179.8 Z" fill="#553622"/><path d="M468,167.6 C474,163.4 482.6,162.6 490,165.8 L489.4,168.4 C482.6,166.4 475,166.8 468.8,170.2 Z" fill="#553622"/></g>
<g filter="url(#b05)"><path d="M435,187.4 C438.6,185 444.6,184.6 448.4,186 C444.6,188.4 438.6,189 435,187.4 Z" fill="#3a2216"/><path d="M472,181.6 C476,178.8 482.4,178.4 486,179.6 C482.4,182.2 476.4,183 472,181.6 Z" fill="#3a2216"/><ellipse cx="442.2" cy="186.6" rx="1.9" ry="1.3" fill="#1a0e08"/><ellipse cx="478.4" cy="180.4" rx="2" ry="1.4" fill="#1a0e08"/><path d="M433,186.4 C437,183 445,182.4 449.6,184.8" stroke="#b07a4c" stroke-width="0.8" fill="none" opacity="0.8"/><path d="M470,180.6 C475,177 483,176.4 487.6,178.6" stroke="#b07a4c" stroke-width="0.8" fill="none" opacity="0.8"/></g>
<rect x="430.4" y="181" width="1.6" height="3.4" fill="#7f9a9a" opacity="0.7"/>
<g filter="url(#b1)"><path d="M455.4,186 C454,196 452,201 452.4,205.6 C454,209.6 458,209.6 460.6,208.6 C463,210 468,209 469.4,205 C469.6,202 468,198 467,194" stroke="#d09464" stroke-width="1.5" fill="none" opacity="0.75"/><ellipse cx="456.4" cy="207.2" rx="2" ry="1.2" fill="#50281a" opacity="0.9"/><ellipse cx="465.6" cy="205.4" rx="2" ry="1.2" fill="#50281a" opacity="0.9"/><path d="M460,184 L460.6,203" stroke="#fbdcb0" stroke-width="3.4" opacity="0.7"/></g>
<g filter="url(#b05)"><path d="M453.8,225 C458,221.4 462.6,218.6 465.6,218.6 C468.6,217.8 475,219 479.6,220.6 C474,222.6 470,223 466,223.2 C462,224.2 457,225.6 453.8,225 Z" fill="#c98a70"/><path d="M455.4,225.2 C460,224 472,222.6 478.6,221 C475.6,225.4 470,227.8 465.4,227.8 C461,227.8 457.6,226.8 455.4,225.2 Z" fill="#e3aa8c"/><path d="M453.8,225 C460,223.4 472,222.2 479.6,220.6" stroke="#9a5a44" stroke-width="0.8" fill="none"/></g>
<ellipse cx="466" cy="232.4" rx="8" ry="2" fill="#d09868" opacity="0.55" filter="url(#b1)"/>
</g>
<path d="M425.6,207 C424,212 426,222 431.6,227.6 L433,222 L428,208 Z" fill="#dca470" filter="url(#b05)"/>
<defs><radialGradient id="hrg" gradientUnits="userSpaceOnUse" cx="464" cy="138" r="54"><stop offset="0" stop-color="#1c110a"/><stop offset="0.6" stop-color="#25160e"/><stop offset="0.88" stop-color="#3c2416"/><stop offset="1" stop-color="#55341f"/></radialGradient></defs>
<g filter="url(#b05)"><path d="M425.7,197.8 L425.2,196.0 L425.2,193.8 L424.8,191.9 L424.5,189.8 L424.6,187.3 L424.3,185.2 L423.0,183.6 L423.2,181.2 L422.6,178.7 L421.1,176.6 L421.1,173.9 L420.0,171.5 L419.8,168.0 L419.0,164.7 L419.0,161.3 L417.8,158.0 L417.6,155.5 L418.0,153.0 L417.7,150.5 L417.8,148.0 L418.9,145.7 L418.5,142.9 L419.1,140.4 L419.8,138.1 L421.4,136.6 L420.5,133.6 L422.9,132.7 L423.5,130.5 L425.2,128.4 L427.8,127.0 L429.5,124.8 L432.8,124.5 L433.6,121.6 L436.1,120.9 L436.8,117.8 L438.7,116.2 L441.7,118.0 L443.2,117.3 L444.8,116.4 L445.5,113.3 L448.3,113.8 L450.2,111.9 L452.6,111.8 L454.5,109.8 L456.3,110.9 L458.0,111.6 L459.6,111.4 L461.4,112.1 L463.9,111.1 L466.5,112.1 L469.1,111.5 L471.7,111.9 L474.0,112.3 L475.9,114.3 L477.4,116.8 L480.4,115.3 L482.7,116.5 L484.8,118.2 L486.4,120.7 L488.9,121.8 L489.5,124.9 L492.6,124.9 L493.7,127.3 L494.6,129.7 L495.7,132.7 L499.6,133.5 L500.2,136.8 L501.0,139.9 L503.0,142.0 L503.8,144.7 L504.8,147.3 L506.2,149.7 L507.5,152.5 L508.5,155.4 L508.4,158.4 L509.8,161.3 L509.6,164.2 L510.8,167.2 L510.8,170.0 L511.8,173.1 L511.9,175.7 L511.4,178.0 L511.9,180.8 L511.2,182.9 L510.1,184.0 L509.8,185.6 L508.4,186.5 L507.8,187.8 L506.1,187.8 L502.8,179.6 L497.8,169.6 L491.2,159.7 L486.2,151.4 L482.9,144.8 L474.6,140.6 L461.4,139.0 L448.1,142.3 L438.2,148.1 L431.5,156.4 L428.2,166.3 L426.5,177.9 L427.0,190.0 Z" fill="url(#hrg)" stroke="#4a2e1c" stroke-width="0.8" stroke-linejoin="round"/></g>
<path d="M425.7,197.8 C425.5,195.6 425.6,193.9 424.9,189.5 C424.2,185.1 424.3,186.1 423.2,181.2 C422.1,176.3 422.0,177.5 420.7,171.3 C419.4,165.1 418.9,164.2 418.3,158.0 C417.7,151.8 417.9,153.4 418.3,148.1 C418.7,142.8 418.1,142.5 419.9,138.1 C421.7,133.7 421.4,135.0 424.9,131.5 C428.4,128.0 429.2,128.4 433.2,124.9 C437.2,121.4 436.3,120.7 439.8,118.2 C443.3,115.7 442.4,117.7 446.4,115.7 C450.4,113.7 450.7,111.4 454.7,110.8 C458.7,110.2 457.0,112.4 461.4,113.3 C465.8,114.2 466.4,113.0 471.3,114.1 C476.2,115.2 475.2,115.0 479.6,117.4 C484.0,119.8 483.9,119.9 487.9,123.2 C491.9,126.5 491.0,125.4 494.5,129.8 C498.0,134.2 498.0,134.5 501.1,139.8 C504.2,145.1 503.9,144.0 506.1,149.7 C508.3,155.4 508.1,155.1 509.4,161.3 C510.7,167.5 510.6,167.1 511.1,172.9 C511.6,178.7 512.0,178.9 511.1,182.9 C510.2,186.9 508.7,186.5 507.8,187.8" fill="none" stroke="#6a4426" stroke-width="2.2" opacity="0.35" filter="url(#b1)"/>
<path d="M506.1,187.8 C505.2,185.6 505.0,184.5 502.8,179.6 C500.6,174.7 500.9,174.9 497.8,169.6 C494.7,164.3 494.3,164.6 491.2,159.7 C488.1,154.8 488.4,155.4 486.2,151.4 C484.0,147.4 486.0,147.7 482.9,144.8 C479.8,141.9 480.3,142.1 474.6,140.6 C468.9,139.1 468.5,138.5 461.4,139.0 C454.3,139.5 454.3,139.9 448.1,142.3 C441.9,144.7 442.6,144.3 438.2,148.1 C433.8,151.9 434.2,151.5 431.5,156.4 C428.8,161.3 429.5,160.6 428.2,166.3 C426.9,172.0 426.8,171.6 426.5,177.9 C426.2,184.2 426.9,186.8 427.0,190.0" fill="none" stroke="#6a4426" stroke-width="1.6" opacity="0.45" filter="url(#b05)"/>
<g filter="url(#b05)" fill="none" stroke="#4e3220" opacity="0.5" stroke-width="1"><path d="M440,134 L446,122 M448,133 L455,118 M457,132 L463,118 M466,133 L472,120 M475,135 L481,124 M484,140 L489,130 M432,142 L437,130 M426,154 L429,140 M492,148 L497,140 M499,160 L503,150"/></g>
</g>
</svg>

<!-- status -->
<svg style="left:0;top:0" width="1024" height="603" viewBox="0 0 1024 603">
<rect x="210.4" y="580.2" width="37" height="20.2" rx="2.2" fill="#3b3b3b" stroke="#2a2a2a" stroke-width="0.9"/>
<rect x="272.4" y="580.2" width="13.2" height="20.2" rx="2.2" fill="#3b3b3b" stroke="#2a2a2a" stroke-width="0.9"/>
<rect x="248.8" y="585.4" width="22.8" height="14.8" fill="#2c2c2c"/>
<path d="M233.6,588 L238,592.4 L242.4,588 M274.8,588 L279,592.4 L283.2,588" fill="none" stroke="#ececec" stroke-width="1.4"/>
</svg>
<div class="t" style="left:216.60px;top:586.05px;font-size:8.6px;line-height:9.89px;color:#d4d4d4;transform:scaleX(0.9248);transform-origin:0 50%;">px</div>
<div class="t" style="left:251.20px;top:586.43px;font-size:7.6px;line-height:8.74px;color:#e4e4e4;transform:scaleX(0.8724);transform-origin:0 50%;">100 %</div>
<div class="t" style="left:289.00px;top:584.88px;font-size:9.6px;line-height:11.04px;color:#dedede;transform:scaleX(0.9015);transform-origin:0 50%;">124592284_s.jpg (4.5 MB)</div>

<!-- rightdock -->
<div class="a" style="left:864.6px;top:45.6px;width:14.4px;height:15px;background:#454545;border:1px solid #5a5a5a;border-bottom:none"></div>
<div class="a" style="left:880.6px;top:46.6px;width:15.399999999999977px;height:13.6px;background:#2c2c2c"></div>
<div class="a" style="left:897px;top:46.6px;width:15.399999999999977px;height:13.6px;background:#2c2c2c"></div>
<div class="a" style="left:913.2px;top:46.6px;width:15.199999999999932px;height:13.6px;background:#2c2c2c"></div>
<div class="a" style="left:929.4px;top:46.6px;width:15.600000000000023px;height:13.6px;background:#2c2c2c"></div>
<div class="a" style="left:865.6px;top:64.6px;width:154.6px;height:14.4px;background:#282828;border-radius:1px"></div>
<div class="a" style="left:865.5px;top:92.8px;width:135.8px;height:153.4px;background:#fff"></div>
<div class="a" style="left:1001.3px;top:92.8px;width:8px;height:153.4px;background:#3d3d3d"></div>
<div class="a" style="left:1009.3px;top:92.8px;width:12.4px;height:153.4px;background:#2b2b2b"></div>
<div class="a" style="left:1010.4px;top:93px;width:10.6px;height:70.6px;background:#5e5e5e;border-radius:2px"></div>
<div class="a" style="left:865.6px;top:249.4px;width:154.6px;height:13.6px;background:#232323"></div>
<div class="a" style="left:864.6px;top:265px;width:157px;height:13.2px;background:#363636;border:1px solid #6c6c6c"></div>
<div class="a" style="left:866.2px;top:266.6px;width:1px;height:10px;background:#111"></div>
<svg style="left:0;top:0" width="1024" height="603" viewBox="0 0 1024 603">
<defs><clipPath id="bclip"><rect x="865.5" y="92.8" width="135.8" height="153.4"/></clipPath><linearGradient id="sun" x1="0" y1="0" x2="0" y2="1"><stop offset="0" stop-color="#4e4596"/><stop offset="0.3" stop-color="#b98aa8"/><stop offset="0.48" stop-color="#f6c08c"/><stop offset="0.56" stop-color="#c58c8a"/><stop offset="0.75" stop-color="#9a70a4"/><stop offset="1" stop-color="#5a4aa0"/></linearGradient><linearGradient id="bw" x1="0" y1="0" x2="0" y2="1"><stop offset="0" stop-color="#0a0a0a"/><stop offset="0.35" stop-color="#9a9a9a"/><stop offset="0.48" stop-color="#e6e6e6"/><stop offset="0.56" stop-color="#555"/><stop offset="0.8" stop-color="#333"/><stop offset="1" stop-color="#0a0a0a"/></linearGradient><linearGradient id="bwh" x1="0" y1="0" x2="1" y2="0"><stop offset="0" stop-color="#000" stop-opacity="0.75"/><stop offset="0.5" stop-color="#000" stop-opacity="0"/><stop offset="1" stop-color="#000" stop-opacity="0.75"/></linearGradient><radialGradient id="rg0"><stop offset="0" stop-color="#000" stop-opacity="1"/><stop offset="0.2" stop-color="#000" stop-opacity="0.75"/><stop offset="0.5" stop-color="#000" stop-opacity="0.25"/><stop offset="0.8" stop-color="#000" stop-opacity="0.05"/><stop offset="1" stop-color="#000" stop-opacity="0"/></radialGradient><radialGradient id="rg1"><stop offset="0" stop-color="#000" stop-opacity="1"/><stop offset="0.3" stop-color="#000" stop-opacity="0.9"/><stop offset="0.6" stop-color="#000" stop-opacity="0.4"/><stop offset="0.85" stop-color="#000" stop-opacity="0.08"/><stop offset="1" stop-color="#000" stop-opacity="0"/></radialGradient><radialGradient id="rg2"><stop offset="0" stop-color="#000" stop-opacity="1"/><stop offset="0.45" stop-color="#000" stop-opacity="0.97"/><stop offset="0.72" stop-color="#000" stop-opacity="0.5"/><stop offset="0.9" stop-color="#000" stop-opacity="0.12"/><stop offset="1" stop-color="#000" stop-opacity="0"/></radialGradient><radialGradient id="sg"><stop offset="0" stop-color="#000" stop-opacity="0.85"/><stop offset="0.4" stop-color="#000" stop-opacity="0.72"/><stop offset="0.75" stop-color="#000" stop-opacity="0.45"/><stop offset="1" stop-color="#000" stop-opacity="0.15"/></radialGradient><filter id="spk1" x="-10%" y="-10%" width="120%" height="120%"><feTurbulence type="fractalNoise" baseFrequency="0.6" numOctaves="2" seed="3" result="n"/><feComposite in="SourceGraphic" in2="n" operator="arithmetic" k1="0" k2="1" k3="1" k4="-1.0" result="c"/><feColorMatrix in="c" type="matrix" values="0 0 0 0 0  0 0 0 0 0  0 0 0 0 0  0 0 0 4 0"/></filter><filter id="spk2" x="-10%" y="-10%" width="120%" height="120%"><feTurbulence type="fractalNoise" baseFrequency="0.8" numOctaves="2" seed="11" result="n"/><feComposite in="SourceGraphic" in2="n" operator="arithmetic" k1="0" k2="1" k3="1" k4="-1.05" result="c"/><feColorMatrix in="c" type="matrix" values="0 0 0 0 0  0 0 0 0 0  0 0 0 0 0  0 0 0 4 0"/></filter><filter id="spk3" x="-10%" y="-10%" width="120%" height="120%"><feTurbulence type="fractalNoise" baseFrequency="0.5" numOctaves="2" seed="5" result="n"/><feComposite in="SourceGraphic" in2="n" operator="arithmetic" k1="0" k2="1" k3="1" k4="-1.0" result="c"/><feColorMatrix in="c" type="matrix" values="0 0 0 0 0  0 0 0 0 0  0 0 0 0 0  0 0 0 5 0"/></filter><filter id="spk4" x="-10%" y="-10%" width="120%" height="120%"><feTurbulence type="fractalNoise" baseFrequency="0.9" numOctaves="2" seed="8" result="n"/><feComposite in="SourceGraphic" in2="n" operator="arithmetic" k1="0" k2="1" k3="1" k4="-1.0" result="c"/><feColorMatrix in="c" type="matrix" values="0 0 0 0 0  0 0 0 0 0  0 0 0 0 0  0 0 0 5 0"/></filter><filter id="bl1" x="-30%" y="-30%" width="160%" height="160%"><feGaussianBlur stdDeviation="0.5"/></filter><filter id="bl2" x="-30%" y="-30%" width="160%" height="160%"><feGaussianBlur stdDeviation="1.3"/></filter></defs>
<g clip-path="url(#bclip)"><rect x="866.4" y="98" width="25.4" height="17.4" fill="url(#sun)"/><rect x="866.4" y="105.6" width="11" height="0.9" fill="#5a3c50" opacity="0.7"/><rect x="889.6" y="102.6" width="0.9" height="6" fill="#3a2a50" opacity="0.6"/><rect x="893.4" y="98" width="25.6" height="17.4" fill="url(#bw)"/><rect x="893.4" y="98" width="25.6" height="17.4" fill="url(#bwh)"/><rect x="895" y="105.4" width="12" height="1" fill="#111" opacity="0.7"/><rect x="931.75" y="105.10000000000001" width="2.2" height="2.2" fill="#333"/><rect x="949" y="103.4" width="23" height="5.6" fill="#000"/><ellipse cx="987.55" cy="106.0" rx="9.4" ry="3" fill="#000" filter="url(#bl2)"/><rect x="868" y="132.8" width="23" height="0.8" fill="#222"/><circle cx="906.2" cy="134.1" r="9.5" fill="url(#rg0)"/><circle cx="933.4" cy="134.1" r="10.5" fill="url(#rg1)"/><circle cx="960.5" cy="134.1" r="11.2" fill="url(#rg2)"/><rect x="974.2" y="120.6" width="26.8" height="26.8" fill="#fff" stroke="#333" stroke-width="1"/><circle cx="987.5" cy="134.1" r="12.2" fill="#000"/><polygon points="879.1,151.5 881.7,158.9 889.6,159.1 883.3,163.9 885.6,171.4 879.1,166.9 872.7,171.4 875.0,163.9 868.7,159.1 876.6,158.9" fill="#000"/><ellipse cx="906.2" cy="161.5" rx="10" ry="9.5" fill="url(#sg)" filter="url(#spk1)"/><ellipse cx="933.4" cy="161.5" rx="11" ry="7.5" fill="url(#sg)" filter="url(#spk2)"/><ellipse cx="960.5" cy="161.5" rx="7.5" ry="11.5" fill="url(#sg)" filter="url(#spk2)" transform="rotate(12 960.5 161.5)"/><ellipse cx="987.5" cy="161.5" rx="9.5" ry="10" fill="url(#sg)" opacity="0.7" filter="url(#spk4)" transform="rotate(20 987.5 161.5)"/><ellipse cx="879.1" cy="188.9" rx="12" ry="12" fill="url(#sg)" filter="url(#spk1)"/><path d="M898.25,177.89999999999998 l2.4,5" stroke="#777" stroke-width="1.2"/><path d="M919.6,202.5 v-4 l-4,4 Z" fill="#f26a6a"/><g fill="#111" opacity="0.75"><circle cx="932.6" cy="192.4" r="1.0"/><circle cx="940.9" cy="192.1" r="0.9"/><circle cx="941.0" cy="191.4" r="0.7"/><circle cx="931.9" cy="190.0" r="0.7"/><circle cx="926.3" cy="193.1" r="0.8"/><circle cx="935.7" cy="196.7" r="1.2"/><circle cx="928.8" cy="186.0" r="1.2"/><circle cx="943.2" cy="191.6" r="0.8"/><circle cx="936.5" cy="191.6" r="0.9"/></g><g fill="#111" opacity="0.8"><circle cx="962.2" cy="185.0" r="1.2"/><circle cx="956.5" cy="184.2" r="1.2"/><circle cx="962.7" cy="189.8" r="0.9"/><circle cx="957.7" cy="183.0" r="1.0"/><circle cx="954.7" cy="185.5" r="1.0"/><circle cx="962.8" cy="180.9" r="1.0"/><circle cx="954.0" cy="185.6" r="1.4"/><circle cx="959.8" cy="183.6" r="1.5"/><circle cx="965.2" cy="193.3" r="1.3"/><circle cx="964.5" cy="194.6" r="0.8"/><circle cx="956.2" cy="181.3" r="1.2"/><circle cx="964.4" cy="185.0" r="1.3"/><circle cx="954.1" cy="184.6" r="1.1"/><circle cx="965.7" cy="180.7" r="1.1"/><circle cx="959.2" cy="186.8" r="1.3"/><circle cx="954.4" cy="180.9" r="1.4"/><circle cx="959.1" cy="195.0" r="1.3"/><circle cx="967.2" cy="189.9" r="0.9"/></g><g fill="#111" opacity="0.75"><circle cx="989.4" cy="190.6" r="0.6"/><circle cx="991.1" cy="192.7" r="0.5"/><circle cx="989.6" cy="186.7" r="0.5"/><circle cx="978.2" cy="185.9" r="0.6"/><circle cx="991.2" cy="184.7" r="0.5"/><circle cx="981.3" cy="196.6" r="0.7"/><circle cx="990.1" cy="192.5" r="0.5"/><circle cx="988.3" cy="196.2" r="0.6"/><circle cx="987.5" cy="189.6" r="0.5"/><circle cx="982.2" cy="194.7" r="0.7"/><circle cx="984.8" cy="181.9" r="0.6"/><circle cx="986.5" cy="186.7" r="0.7"/><circle cx="989.4" cy="179.3" r="0.6"/><circle cx="982.4" cy="193.1" r="0.4"/><circle cx="985.8" cy="186.9" r="0.4"/><circle cx="988.6" cy="193.0" r="0.5"/><circle cx="987.7" cy="189.0" r="0.4"/><circle cx="992.6" cy="192.7" r="0.4"/><circle cx="993.3" cy="183.1" r="0.4"/><circle cx="987.5" cy="195.1" r="0.5"/></g><circle cx="878.1" cy="216.3" r="11.5" fill="url(#sg)" filter="url(#spk3)"/><circle cx="906.2" cy="216.3" r="11.6" fill="#000" fill-opacity="0.62" filter="url(#spk3)"/><g filter="url(#bl1)"><g fill="#000" opacity="0.85"></g><g fill="#fff"><circle cx="912.5" cy="222.4" r="1.9"/><circle cx="899.8" cy="217.7" r="1.1"/><circle cx="910.7" cy="219.6" r="1.2"/><circle cx="908.1" cy="213.0" r="1.0"/><circle cx="912.8" cy="214.2" r="1.1"/><circle cx="904.8" cy="215.9" r="1.5"/><circle cx="915.0" cy="215.1" r="1.6"/><circle cx="905.9" cy="222.0" r="1.2"/><circle cx="907.2" cy="209.5" r="1.7"/><circle cx="904.1" cy="220.2" r="1.7"/><circle cx="914.9" cy="215.5" r="1.7"/><circle cx="909.6" cy="208.9" r="1.2"/><circle cx="900.6" cy="215.7" r="1.0"/><circle cx="911.2" cy="217.2" r="1.2"/><circle cx="903.0" cy="207.7" r="1.4"/><circle cx="914.9" cy="212.7" r="1.9"/><circle cx="903.3" cy="219.6" r="1.2"/><circle cx="907.7" cy="220.3" r="1.6"/><circle cx="913.3" cy="211.2" r="1.4"/><circle cx="901.4" cy="209.4" r="1.1"/><circle cx="901.4" cy="208.7" r="1.7"/><circle cx="906.3" cy="209.8" r="1.2"/><circle cx="907.6" cy="211.0" r="1.7"/><circle cx="912.1" cy="215.2" r="1.4"/><circle cx="913.8" cy="213.7" r="1.2"/><circle cx="908.8" cy="218.9" r="1.8"/></g></g><circle cx="933.4" cy="216.3" r="12" fill="url(#sg)" filter="url(#spk4)"/><circle cx="960.5" cy="216.3" r="11.4" fill="#000" fill-opacity="0.55" filter="url(#spk4)"/><circle cx="987.5" cy="216.3" r="10.8" fill="#0c0c0c"/><g clip-path="url(#c44)"><path d="M976.55,218.29999999999998 Q987.55,219.29999999999998 993.55,227.29999999999998 L976.55,227.29999999999998 Z" fill="#fff" opacity="0.85" filter="url(#bl2)"/></g><g fill="#ddd" opacity="0.9"><circle cx="990.3" cy="211.1" r="0.7"/><circle cx="994.4" cy="212.7" r="0.5"/><circle cx="987.5" cy="212.6" r="0.4"/><circle cx="994.3" cy="212.4" r="0.6"/><circle cx="993.2" cy="211.7" r="0.7"/><circle cx="990.8" cy="210.9" r="0.5"/><circle cx="988.8" cy="216.1" r="0.6"/><circle cx="989.3" cy="217.2" r="0.5"/><circle cx="992.6" cy="211.4" r="0.6"/><circle cx="984.6" cy="210.4" r="0.6"/><circle cx="993.2" cy="211.2" r="0.6"/><circle cx="988.7" cy="213.2" r="0.6"/><circle cx="989.7" cy="213.6" r="0.7"/><circle cx="991.5" cy="216.9" r="0.7"/><circle cx="986.3" cy="212.1" r="0.6"/><circle cx="984.6" cy="211.5" r="0.4"/></g><rect x="868.15" y="236.7" width="21" height="14" rx="3" fill="#000" fill-opacity="0.58" filter="url(#spk4)"/><g filter="url(#spk4)"><path d="M896.25,237.3 q9,-2.4 18,-0.4" stroke="#000" stroke-opacity="0.6" stroke-width="1.5" fill="none"/><path d="M896.25,239.2 q9,-2.4 18,-0.4" stroke="#000" stroke-opacity="0.6" stroke-width="1.5" fill="none"/><path d="M896.25,241.1 q9,-2.4 18,-0.4" stroke="#000" stroke-opacity="0.6" stroke-width="1.5" fill="none"/><path d="M896.25,243.0 q9,-2.4 18,-0.4" stroke="#000" stroke-opacity="0.6" stroke-width="1.5" fill="none"/><path d="M896.25,244.9 q9,-2.4 18,-0.4" stroke="#000" stroke-opacity="0.6" stroke-width="1.5" fill="none"/><path d="M896.25,246.8 q9,-2.4 18,-0.4" stroke="#000" stroke-opacity="0.6" stroke-width="1.5" fill="none"/></g><g transform="translate(0,0)" fill="#111" opacity="0.7"><circle cx="932.2" cy="241.3" r="0.4"/><circle cx="933.6" cy="240.0" r="0.5"/><circle cx="933.5" cy="239.4" r="0.4"/><circle cx="932.1" cy="240.6" r="0.5"/><circle cx="932.8" cy="240.2" r="0.5"/><circle cx="931.0" cy="242.0" r="0.5"/><circle cx="935.0" cy="240.1" r="0.4"/><circle cx="931.2" cy="240.8" r="0.6"/><circle cx="933.9" cy="242.3" r="0.4"/><circle cx="934.4" cy="242.2" r="0.3"/><circle cx="932.3" cy="239.8" r="0.6"/><circle cx="934.5" cy="243.4" r="0.5"/><circle cx="934.8" cy="243.5" r="0.6"/><circle cx="933.8" cy="244.0" r="0.4"/><circle cx="931.0" cy="241.9" r="0.5"/><circle cx="934.2" cy="243.0" r="0.5"/><circle cx="932.8" cy="242.6" r="0.4"/><circle cx="933.3" cy="241.4" r="0.5"/><circle cx="933.0" cy="241.8" r="0.4"/><circle cx="932.1" cy="240.5" r="0.3"/><circle cx="935.5" cy="241.5" r="0.6"/><circle cx="934.3" cy="242.5" r="0.3"/><circle cx="933.6" cy="240.5" r="0.3"/><circle cx="931.3" cy="242.8" r="0.5"/><circle cx="933.3" cy="242.6" r="0.6"/><circle cx="931.5" cy="240.8" r="0.3"/></g><path d="M963.8,238.5 l3.0,0.5" stroke="#999" stroke-width="1.2"/><path d="M968.3,240.4 l2.9,0.7" stroke="#999" stroke-width="1.2"/><path d="M953.0,242.4 l-2.4,1.8" stroke="#999" stroke-width="1.2"/><path d="M967.0,238.8 l2.9,0.6" stroke="#999" stroke-width="1.2"/><path d="M961.4,243.0 l1.5,2.6" stroke="#999" stroke-width="1.2"/><path d="M953.8,239.4 l2.0,2.2" stroke="#999" stroke-width="1.2"/><path d="M953.4,236.2 l2.2,2.0" stroke="#999" stroke-width="1.2"/><path d="M955.1,237.5 l3.0,0.5" stroke="#999" stroke-width="1.2"/><path d="M965.1,237.3 l1.7,2.5" stroke="#999" stroke-width="1.2"/><path d="M977.55,235.7 l4,7 l3,-7 l-3,8 l-3,-3 M983.55,242.7 h12 v-3 l2,3 v5 M985.55,241.7 v6" stroke="#aaa" stroke-width="1" fill="none"/><path d="M888.0,117.6 h3.6 M889.8,115.8 v3.6" stroke="#111" stroke-width="0.9"/><path d="M915.1,117.6 h3.6 M916.9,115.8 v3.6" stroke="#111" stroke-width="0.9"/><path d="M945.95,116.00000000000001 v3.2 h-3.4 Z" fill="#7f9bea"/><path d="M969.3,117.6 h3.6 M971.1,115.8 v3.6" stroke="#111" stroke-width="0.9"/><rect x="971.5" y="116.3" width="1.6" height="2.6" fill="#5878e0" opacity="0.75"/><path d="M996.4,117.6 h3.6 M998.1,115.8 v3.6" stroke="#111" stroke-width="0.9"/><rect x="998.5" y="116.3" width="1.6" height="2.6" fill="#5878e0" opacity="0.75"/><path d="M888.0,145.0 h3.6 M889.8,143.2 v3.6" stroke="#111" stroke-width="0.9"/><rect x="890.1" y="143.7" width="1.6" height="2.6" fill="#5878e0" opacity="0.75"/><path d="M915.1,145.0 h3.6 M916.9,143.2 v3.6" stroke="#111" stroke-width="0.9"/><rect x="917.2" y="143.7" width="1.6" height="2.6" fill="#5878e0" opacity="0.75"/><path d="M942.2,145.0 h3.6 M944.0,143.2 v3.6" stroke="#111" stroke-width="0.9"/><rect x="944.4" y="143.7" width="1.6" height="2.6" fill="#5878e0" opacity="0.75"/><path d="M969.3,145.0 h3.6 M971.1,143.2 v3.6" stroke="#111" stroke-width="0.9"/><rect x="971.5" y="143.7" width="1.6" height="2.6" fill="#5878e0" opacity="0.75"/><path d="M996.4,145.0 h3.6 M998.1,143.2 v3.6" stroke="#111" stroke-width="0.9"/><rect x="998.5" y="143.7" width="1.6" height="2.6" fill="#5878e0" opacity="0.75"/><path d="M888.0,172.4 h3.6 M889.8,170.6 v3.6" stroke="#111" stroke-width="0.9"/><rect x="890.1" y="171.1" width="1.6" height="2.6" fill="#5878e0" opacity="0.75"/><path d="M915.1,172.4 h3.6 M916.9,170.6 v3.6" stroke="#111" stroke-width="0.9"/><rect x="917.2" y="171.8" width="1.6" height="2.2" fill="#e86060" opacity="0.8"/><path d="M942.2,172.4 h3.6 M944.0,170.6 v3.6" stroke="#111" stroke-width="0.9"/><rect x="944.4" y="171.8" width="1.6" height="2.2" fill="#e86060" opacity="0.8"/><path d="M969.3,172.4 h3.6 M971.1,170.6 v3.6" stroke="#111" stroke-width="0.9"/><rect x="971.5" y="171.8" width="1.6" height="2.2" fill="#e86060" opacity="0.8"/><path d="M996.4,172.4 h3.6 M998.1,170.6 v3.6" stroke="#111" stroke-width="0.9"/><rect x="998.5" y="171.8" width="1.6" height="2.2" fill="#e86060" opacity="0.8"/><path d="M888.0,199.8 h3.6 M889.8,198.0 v3.6" stroke="#111" stroke-width="0.9"/><rect x="890.1" y="199.2" width="1.6" height="2.2" fill="#e86060" opacity="0.8"/><path d="M942.2,199.8 h3.6 M944.0,198.0 v3.6" stroke="#111" stroke-width="0.9"/><path d="M969.3,199.8 h3.6 M971.1,198.0 v3.6" stroke="#111" stroke-width="0.9"/><path d="M996.4,199.8 h3.6 M998.1,198.0 v3.6" stroke="#111" stroke-width="0.9"/><rect x="998.5" y="199.2" width="1.6" height="2.2" fill="#e86060" opacity="0.8"/><path d="M888.0,227.2 h3.6 M889.8,225.4 v3.6" stroke="#111" stroke-width="0.9"/><path d="M915.1,227.2 h3.6 M916.9,225.4 v3.6" stroke="#111" stroke-width="0.9"/><path d="M942.2,227.2 h3.6 M944.0,225.4 v3.6" stroke="#111" stroke-width="0.9"/><rect x="944.4" y="226.6" width="1.6" height="2.2" fill="#e86060" opacity="0.8"/><path d="M969.3,227.2 h3.6 M971.1,225.4 v3.6" stroke="#111" stroke-width="0.9"/><rect x="971.5" y="226.6" width="1.6" height="2.2" fill="#e86060" opacity="0.8"/><path d="M996.4,227.2 h3.6 M998.1,225.4 v3.6" stroke="#111" stroke-width="0.9"/><rect x="998.5" y="226.6" width="1.6" height="2.2" fill="#e86060" opacity="0.8"/></g>
<g fill="#c2c2c2"><rect x="866.2" y="47.6" width="11.4" height="11.4" rx="1" fill="#f4f4f4"/><circle cx="871.9" cy="53.3" r="5" fill="#000"/><path d="M866.2,47.6 h3.8 l-3.8,3.8 Z M877.6,47.6 h-3.8 l3.8,3.8 Z M866.2,59 h3.8 l-3.8,-3.8 Z M877.6,59 h-3.8 l3.8,-3.8 Z" fill="#000"/><linearGradient id="og" x1="0" y1="0" x2="1" y2="0"><stop offset="0" stop-color="#e8943a"/><stop offset="0.45" stop-color="#fbc660"/><stop offset="1" stop-color="#f4a840"/></linearGradient><rect x="882.8" y="48.4" width="10.8" height="10.8" fill="url(#og)"/><path d="M885.4,48.4 v10.8 M888.2,48.4 v10.8 M891,48.4 v10.8" stroke="#f6b450" stroke-width="0.8" opacity="0.7"/><rect x="899.2" y="47.8" width="11.4" height="11" fill="#fff"/><rect x="916" y="50.4" width="9.6" height="6.8" fill="#e8862e"/><rect x="917" y="51.4" width="3.4" height="2.6" fill="#f6d048"/><path d="M919,56.6 l2.6,-2.8 l1.6,1.4 l1.2,-1 l1,2.4 Z" fill="#f8e8a0"/><rect x="916" y="50.4" width="9.6" height="6.8" fill="none" stroke="#c05a1e" stroke-width="0.6"/><rect x="931.2" y="47.8" width="11.6" height="11.2" fill="#1c1c1c"/><path d="M934.6,49.6 V57.4 L936.6,55.6 L938,58.6 L939.2,58 L937.8,55.2 H940.4 Z" fill="#d8d8d8"/><rect x="1012.2" y="49.6" width="7.8" height="7.6" fill="none" stroke="#c2c2c2" stroke-width="0.9"/><path d="M1018.2,51.2 v4.4 l-4,-2.2 Z"/><rect x="1012.2" y="307.6" width="7.8" height="7.6" fill="none" stroke="#c2c2c2" stroke-width="0.9"/><path d="M1018.2,309.20000000000005 v4.4 l-4,-2.2 Z"/><path d="M1008,69.8 L1012,73.6 L1016,69.8 M1008,254 L1012,257.8 L1016,254" fill="none" stroke="#f0f0f0" stroke-width="1.5"/><path d="M1013.4,270.4 L1016.6,267.6 L1019.8,270.4 M1013.4,273.2 L1016.6,276 L1019.8,273.2" fill="none" stroke="#e4e4e4" stroke-width="1.3"/><path d="M873.4,286 h5 v1.3 h-5 Z M873.4,289 h3.4 v1.3 h-3.4 Z M873.4,292.4 h8.6 v1.3 h-8.6 Z"/><path d="M877.4,291.2 L877.8,288.8 L882,284.4 L883.8,286 L879.6,290.6 Z"/><path d="M900.4,286 H905 L907.2,288.4 V294.6 H900.4 Z" fill="none" stroke="#c2c2c2" stroke-width="1.1"/><path d="M898.4,285.6 h4.4 M900.6,283.4 v4.4" stroke="#c2c2c2" stroke-width="1.2"/><g fill="none" stroke="#8c8c8c" stroke-width="1"><rect x="925" y="285.6" width="5.6" height="4.6"/><rect x="928" y="288.6" width="5.6" height="4.6" fill="#454545"/></g><rect x="950.8" y="284" width="10.2" height="10.2"/><path d="M953,286.2 L958.8,292 M958.8,286.2 L953,292" stroke="#454545" stroke-width="1.5"/><path d="M985.8,286.2 A4,4 0 1 0 986.4,291.6" fill="none" stroke="#c2c2c2" stroke-width="1.4"/><path d="M983.4,284.4 h4.2 v4.2 Z"/><path d="M1004.8,284.4 h5.2 l2.4,2.4 v4.4 h-7.6 Z" fill="none" stroke="#c2c2c2" stroke-width="1" stroke-dasharray="1.2 0.8"/><path d="M1003.4,290.4 h10.6 v4 h-10.6 Z"/><rect x="935.2" y="300" width="3" height="1.6" fill="#a8a8a8"/><rect x="941" y="300" width="3" height="1.6" fill="#a8a8a8"/><rect x="946.8" y="300" width="3" height="1.6" fill="#a8a8a8"/></g>
<rect x="864" y="303.8" width="14.6" height="16" fill="#454545" stroke="#5a5a5a" stroke-width="0.9"/><rect x="863" y="319.4" width="17" height="2" fill="#454545"/><rect x="879.4" y="305.4" width="13.4" height="13" fill="#2c2c2c"/><rect x="894" y="305.4" width="14.4" height="13" fill="#2c2c2c"/><g fill="#ececec"><path d="M867.6,306.4 h8.6 l-1,2.2 h-8.6 Z M867.2,310 h8.6 l-1,2.2 h-8.6 Z M866.8,313.6 h8.6 l-1,2.2 h-8.6 Z"/></g><g fill="none" stroke="#c2c2c2" stroke-width="0.9"><rect x="881.2" y="307" width="9.8" height="9.8"/><path d="M883.8,308.4 v7 M886.1,308.4 v7 M888.4,308.4 v7" stroke-width="1.1"/></g><g fill="none" stroke="#d0d0d0" stroke-width="1.2"><path d="M896.6,316.4 C897.6,311 905,311 906,316.4 M896.4,308.6 H906.2"/></g><rect x="900.2" y="307.4" width="2.2" height="2.2" fill="#d0d0d0"/><rect x="865.4" y="322.8" width="120.6" height="19.8" rx="2.4" fill="#3b3b3b" stroke="#2b2b2b" stroke-width="0.9"/><rect x="988.2" y="322.8" width="33.2" height="19.8" rx="2.4" fill="#3b3b3b" stroke="#2b2b2b" stroke-width="0.9"/><path d="M994.4,330.2 A3.6,3.6 0 1 1 997.4,335.8" fill="none" stroke="#c2c2c2" stroke-width="1.3"/><path d="M992.4,331.6 L995,328 L996.6,332 Z" fill="#c2c2c2"/><circle cx="994.6" cy="335.4" r="1.4" fill="#c2c2c2"/><path d="M971.6,330 L976.2,334.4 L980.8,330 M1007,330 L1011.6,334.4 L1016.2,330" fill="none" stroke="#f0f0f0" stroke-width="1.5"/><rect x="865" y="344.8" width="157" height="12.4" fill="#5b5b5b" stroke="#747474" stroke-width="0.9"/><rect x="1011.4" y="345.3" width="10.2" height="11.4" fill="#2d2d2d"/><path d="M1013.6,349.6 L1016.6,347 L1019.6,349.6" fill="none" stroke="#7a7a7a" stroke-width="1.2"/><path d="M1013.6,352.4 L1016.6,355 L1019.6,352.4" fill="none" stroke="#e4e4e4" stroke-width="1.2"/><g fill="#c2c2c2"><path d="M902.4,362.8 L897.4,369 L896,368 Z M896.6,368.6 L897.6,369.6 C897,371.6 895.4,372.6 893.4,372.6 C894.6,371.6 894.6,369.4 896.6,368.6Z"/><path d="M916.8,362.6 l2.2,2.4 h-1.6 v2.2 h2.2 v-1.6 l2.4,2.2 l-2.4,2.2 v-1.6 h-2.2 v2.2 h1.6 l-2.2,2.4 l-2.2,-2.4 h1.6 v-2.2 h-2.2 v1.6 l-2.4,-2.2 l2.4,-2.2 v1.6 h2.2 v-2.2 h-1.6 Z"/></g><defs><pattern id="lk" x="930.4" y="362.2" width="3.6" height="3.6" patternUnits="userSpaceOnUse"><rect width="3.6" height="3.6" fill="#8a8a8a"/><rect width="1.8" height="1.8" fill="#cfcfcf"/><rect x="1.8" y="1.8" width="1.8" height="1.8" fill="#cfcfcf"/></pattern></defs><rect x="930.4" y="362.2" width="10.8" height="10.8" fill="url(#lk)"/><rect x="865.3" y="378" width="155.6" height="191.6" fill="#2e2e2e"/><rect x="865.3" y="378" width="155.6" height="23" fill="#1f1f1f"/><path d="M869.2,389.8 C872.4,384.6 881,384.6 884.2,389.8 C881,395 872.4,395 869.2,389.8 Z" fill="none" stroke="#e8e8e8" stroke-width="1.3"/><circle cx="876.7" cy="389.6" r="2.7" fill="none" stroke="#e8e8e8" stroke-width="1.3"/><circle cx="876.7" cy="389.6" r="0.9" fill="#e8e8e8"/><rect x="925" y="379.8" width="29" height="20" fill="#fff"/><rect x="926" y="380.8" width="27" height="18" fill="#f8e070"/><clipPath id="lclip"><rect x="926" y="380.8" width="27" height="18"/></clipPath><g clip-path="url(#lclip)"><path d="M933.28,391.28 L932.23,391.36 L931.91,391.84 L931.62,392.66 L931.58,392.95 L931.72,393.42 L931.91,393.82 L932.32,394.47 L932.90,395.24 L933.47,396.00 L933.91,396.57 L934.06,396.91 L934.30,397.39 L934.62,397.67 L935.09,397.75 L935.65,397.91 L935.85,397.83 L936.12,397.63 L936.18,397.23 L936.16,396.84 L935.96,396.52 L935.65,396.20 L935.37,396.09 L935.09,396.14 L934.83,395.98 L934.67,395.72 L934.24,395.04 L933.76,394.28 L933.33,393.55 L933.13,393.16 L933.07,392.79 L933.18,392.51 L933.67,392.00 Z" fill="#e2a870"/><path d="M943.07,391.28 L944.13,391.47 L944.43,391.84 L944.69,392.47 L944.75,393.00 L944.59,393.58 L944.27,394.26 L943.90,395.00 L943.44,395.76 L942.74,396.74 L942.47,397.11 L942.26,397.43 L941.77,397.71 L941.22,397.77 L940.67,397.64 L940.25,397.43 L940.04,397.08 L940.11,396.80 L940.53,396.46 L940.39,396.18 L940.73,396.02 L941.35,396.11 L941.63,396.29 L941.84,396.18 L942.26,395.49 L942.53,395.00 L942.85,394.26 L943.17,393.58 L943.32,393.00 L943.27,392.58 L942.75,392.00 Z" fill="#e2a870"/><path d="M938.05,385.71 L937.22,385.95 L937.13,386.26 L937.14,386.53 L937.16,387.00 L936.99,387.32 L936.67,387.49 L936.76,387.75 L936.99,387.93 L937.37,388.12 L937.83,388.23 L938.30,388.28 L938.77,388.23 L939.23,388.12 L939.61,387.93 L939.93,387.65 L940.07,387.42 L939.89,387.32 L939.61,387.00 L939.42,386.53 L939.34,386.18 L939.21,385.87 Z" fill="#e6ae78"/><path d="M936.67,387.49 L936.34,387.65 L935.48,388.06 L934.72,388.17 L934.14,388.39 L933.86,388.68 L933.47,389.25 L932.99,390.02 L932.52,390.79 L932.19,391.30 L932.30,391.56 L932.52,391.89 L932.90,392.37 L933.18,392.51 L933.52,392.37 L933.95,392.18 L934.10,392.27 L934.29,392.70 L934.43,393.32 L934.57,393.99 L934.60,394.66 L934.60,395.34 L934.76,395.84 L935.11,396.07 L935.37,396.09 L935.65,396.20 L935.96,396.52 L936.16,396.84 L936.18,397.23 L936.12,397.63 L935.85,397.83 L935.65,397.91 L935.15,397.79 L934.97,398.24 L934.81,398.76 L934.71,399.80 L941.95,399.80 L941.85,398.76 L941.78,397.85 L941.55,397.77 L941.22,397.77 L940.67,397.64 L940.25,397.43 L940.04,397.08 L940.11,396.80 L940.53,396.46 L940.39,396.18 L940.73,396.02 L941.20,395.99 L941.36,395.21 L941.57,394.24 L941.84,393.00 L942.12,391.90 L942.47,392.03 L942.88,392.37 L943.11,392.54 L943.42,392.41 L943.76,392.03 L944.06,391.45 L944.10,391.07 L943.71,390.40 L943.33,389.64 L942.95,388.97 L942.47,388.39 L942.09,388.12 L941.61,388.01 L940.84,387.73 L940.45,387.59 L940.07,387.42 L939.93,387.65 L939.61,387.93 L939.23,388.12 L938.77,388.23 L938.30,388.28 L937.83,388.23 L937.37,388.12 L936.99,387.93 L936.76,387.75 Z" fill="#f6f4f0"/><path d="M936.22,383.48 L936.20,384.29 L936.30,384.85 L936.34,385.26 L936.42,385.59 L936.55,385.82 L936.70,385.97 L937.00,386.30 L937.41,386.61 L938.04,386.79 L938.59,386.65 L939.01,386.30 L939.29,385.89 L939.46,385.31 L939.60,385.26 L939.84,385.05 L939.98,384.64 L939.84,384.22 L939.56,384.13 L939.52,383.48 L939.05,382.48 L937.65,382.09 L936.54,382.52 Z" fill="#f0c088"/><path d="M936.29,384.58 L936.26,384.25 L936.19,383.92 L936.09,383.53 L935.99,383.00 L935.99,382.61 L936.06,382.21 L936.26,381.95 L936.59,381.68 L936.85,381.42 L937.11,381.32 L937.44,381.12 L937.71,381.22 L938.10,381.25 L938.43,381.39 L938.76,381.62 L939.03,381.88 L939.29,382.28 L939.49,382.67 L939.62,383.13 L939.69,383.59 L939.69,383.99 L939.56,384.19 L939.49,384.19 L939.36,383.86 L939.16,383.46 L938.90,383.07 L938.70,382.74 L938.56,382.48 L938.23,382.31 L937.71,382.24 L937.18,382.38 L936.79,382.61 L936.52,382.94 L936.39,383.33 L936.32,383.79 L936.34,384.27 Z" fill="#2e1c12"/></g><rect x="865.3" y="569.6" width="155.6" height="11.2" fill="#262626"/><rect x="865.5" y="570" width="132.4" height="10.6" rx="1.8" fill="#5e5e5e"/><g fill="#c2c2c2"><path d="M870.6,588 H875.4 L877.6,590.4 V596.4 H870.6 Z" fill="none" stroke="#c2c2c2" stroke-width="1.1"/><path d="M868.4,587.6 h4.4 M870.6,585.4 v4.4" stroke="#c2c2c2" stroke-width="1.2"/><path d="M887.6,586.4 h4 l1,1.4 h5.4 v8.8 h-10.4 Z"/><path d="M890,592 h6 M893,589.2 v5.6" stroke="#454545" stroke-width="1.5"/><path d="M907.4,593.6 L912,589.2 L916.6,593.6 M927,589.6 L931.6,594 L936.2,589.6" fill="none" stroke="#c2c2c2" stroke-width="1.5"/><g fill="none" stroke="#c2c2c2" stroke-width="1"><rect x="946" y="587.6" width="5.6" height="4.6"/><rect x="949" y="590.6" width="5.6" height="4.6" fill="#454545"/></g><path d="M965.2,588.6 h5 l-0.6,1.5 h-5 Z M965,591.2 h5 l-0.6,1.5 h-5 Z M964.8,593.8 h5 l-0.6,1.5 h-5 Z"/><path d="M972.2,587.4 h1.2 v5.4 h1.4 l-2,2.6 l-2,-2.6 h1.4 Z"/><path d="M985.6,586.4 h7 v1.6 h-1.6 v2.6 l-1.9,1 l-1.9,-1 v-2.6 h-1.6 Z M984.4,592.4 h9.6 l-1.6,3.6 h-9.4 Z"/><rect x="1004.8" y="586.4" width="10.2" height="10.2"/><path d="M1007,588.6 L1012.8,594.4 M1012.8,588.6 L1007,594.4" stroke="#454545" stroke-width="1.6"/></g></svg>
<div class="t" style="left:867.20px;top:66.48px;font-size:9.6px;line-height:11.04px;color:#6e6e6e;font-style:italic;transform:scaleX(1.1469);transform-origin:0 50%;">filter</div>
<div class="t" style="left:865.80px;top:80.48px;font-size:9.6px;line-height:11.04px;color:#dedede;font-style:italic;transform:scaleX(1.0572);transform-origin:0 50%;">2. Hardness 100 (51 × 51)</div>
<div class="t" style="left:900.60px;top:49.38px;font-size:7px;line-height:8.05px;color:#222;transform:scaleX(1.0277);transform-origin:0 50%;">Aa</div>
<div class="t" style="left:868.20px;top:250.68px;font-size:9.6px;line-height:11.04px;color:#dedede;transform:scaleX(0.9869);transform-origin:0 50%;">Basic,</div>
<div class="t" style="left:866.60px;top:266.28px;font-size:9.6px;line-height:11.04px;color:#dedede;transform:scaleX(0.9915);transform-origin:0 50%;">Spacing</div>
<div class="t" style="left:991.00px;top:266.28px;font-size:9.6px;line-height:11.04px;color:#dedede;transform:scaleX(1.0169);transform-origin:0 50%;">10.0</div>
<div class="t" style="left:870.80px;top:326.88px;font-size:9.6px;line-height:11.04px;color:#dedede;transform:scaleX(0.9869);transform-origin:0 50%;">Mode</div>
<div class="t" style="left:934.00px;top:326.88px;font-size:9.6px;line-height:11.04px;color:#dedede;transform:scaleX(1.0343);transform-origin:0 50%;">Normal</div>
<div class="t" style="left:866.60px;top:345.48px;font-size:9.6px;line-height:11.04px;color:#dedede;transform:scaleX(1.0263);transform-origin:0 50%;">Opacity</div>
<div class="t" style="left:985.80px;top:345.48px;font-size:9.6px;line-height:11.04px;color:#dedede;transform:scaleX(1.0157);transform-origin:0 50%;">100.0</div>
<div class="t" style="left:864.80px;top:361.88px;font-size:9.6px;line-height:11.04px;color:#dedede;transform:scaleX(0.9501);transform-origin:0 50%;">Lock:</div>
<div class="a" style="left:957.8px;top:382px;width:63px;height:15px;overflow:hidden"><div class="t" style="left:0;top:1.6px;font-size:9.6px;line-height:11px;font-weight:bold;color:#e6e6e6;transform:scaleX(1.1275);transform-origin:0 50%">124592284_s.jpg</div></div>

</div>
</body></html>
